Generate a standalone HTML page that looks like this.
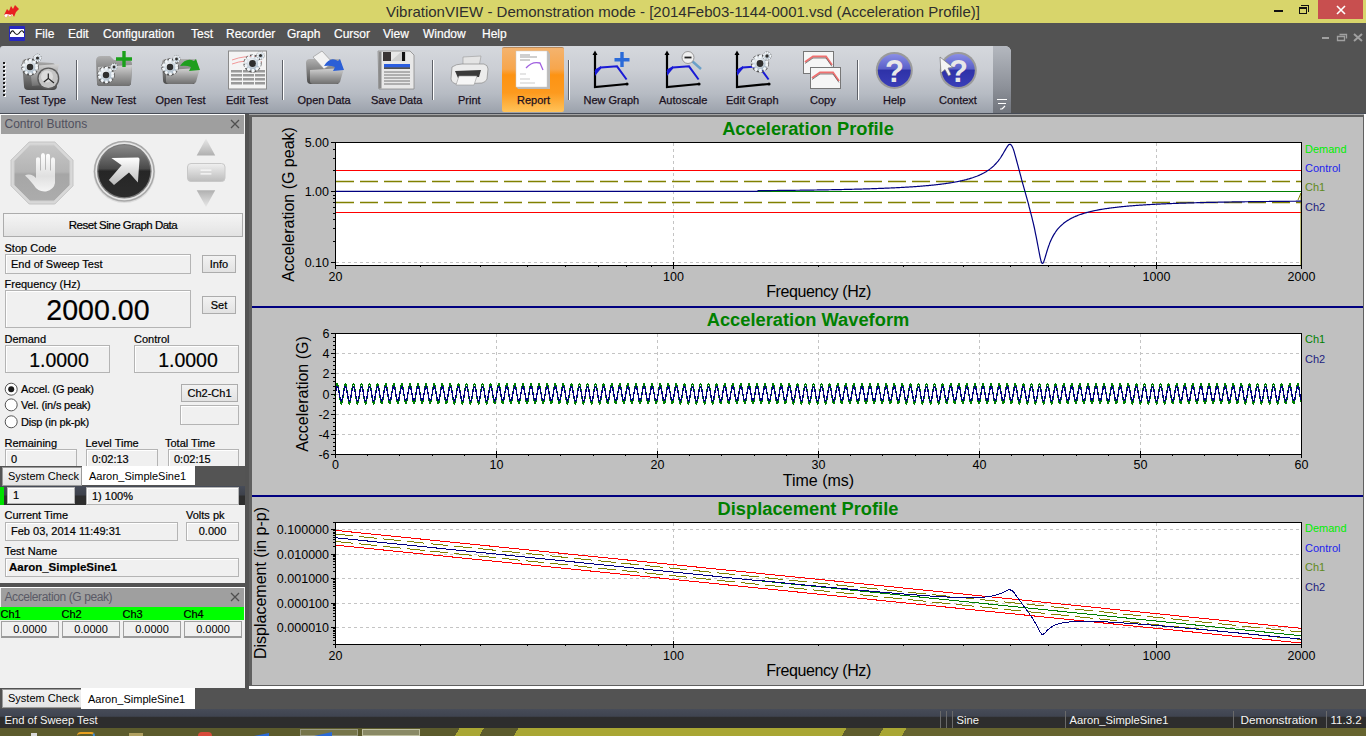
<!DOCTYPE html>
<html><head><meta charset="utf-8">
<style>
*{margin:0;padding:0;box-sizing:border-box}
html,body{width:1366px;height:736px;overflow:hidden;background:#535353;font-family:"Liberation Sans",sans-serif}
.a{position:absolute}
.t{position:absolute;white-space:nowrap;line-height:1}
#title{left:0;top:0;width:1366px;height:23px;background:#d8d56b}
#menu{left:0;top:23px;width:1366px;height:23px;background:#535353}
.mi{position:absolute;top:28px;color:#fff;font-size:12px;line-height:12px;-webkit-text-stroke:0.2px #fff}
#tb{left:0;top:46px;width:1011px;height:67px;background:linear-gradient(#d6d9de,#c4c7cd 45%,#aeb2b9);border-radius:4px 6px 0 0}
.tl{position:absolute;top:94px;font-size:11px;line-height:12px;color:#1a1020;white-space:nowrap;-webkit-text-stroke:0.25px #1a1020}
.sep{position:absolute;top:60px;width:2px;height:40px;background:linear-gradient(90deg,#5e6168 0 1px,#ffffff 1px)}
.ph{position:absolute;background:#9f9f9f;color:#50505e;font-size:12px;line-height:19px;padding-left:4px;border-top:1px solid #fff}
.lbl{position:absolute;font-size:11px;line-height:12px;color:#000;white-space:nowrap;-webkit-text-stroke:0.2px #000}
.fld{position:absolute;border:1px solid #b4b4b4;background:#f0f0f0;font-size:11px;color:#000;white-space:nowrap;box-shadow:inset 1px 1px 0 #fff;-webkit-text-stroke:0.2px #000}
.btn{position:absolute;border:1px solid #acacac;background:linear-gradient(#f2f2f2,#e2e2e2);font-size:11px;color:#000;text-align:center;white-space:nowrap;-webkit-text-stroke:0.2px #000}
.gt{position:absolute;font-weight:bold;color:#008000;font-size:18px;line-height:18px;white-space:nowrap}
.ax{position:absolute;font-size:13px;line-height:13px;color:#000;white-space:nowrap}
.axl{position:absolute;font-size:16px;line-height:16px;color:#000;white-space:nowrap}
.lg{position:absolute;font-size:11px;line-height:11px;white-space:nowrap}
</style></head><body>

<!-- TITLE BAR -->
<div id="title" class="a"></div>
<div class="t" style="left:386px;top:4px;font-size:15px;color:#2e2e2e">VibrationVIEW - Demonstration mode - [2014Feb03-1144-0001.vsd (Acceleration Profile)]</div>
<div class="a" style="left:1274px;top:10px;width:9px;height:2px;background:#111"></div>
<div class="a" style="left:1299px;top:7px;width:8px;height:7px;border:1px solid #111;border-top-width:2px"></div>
<div class="a" style="left:1301px;top:5px;width:8px;height:7px;border-top:1px solid #111;border-right:1px solid #111"></div>
<div class="a" style="left:1318px;top:0;width:45px;height:19px;background:#c84f4f"></div>
<svg class="a" style="left:1336px;top:5px" width="10" height="10"><path d="M1 1L9 9M9 1L1 9" stroke="#fff" stroke-width="1.6"/></svg>

<!-- MENU BAR -->
<div id="menu" class="a"></div>
<div class="mi" style="left:35px">File</div>
<div class="mi" style="left:68px">Edit</div>
<div class="mi" style="left:103px">Configuration</div>
<div class="mi" style="left:191px">Test</div>
<div class="mi" style="left:226px">Recorder</div>
<div class="mi" style="left:287px">Graph</div>
<div class="mi" style="left:334px">Cursor</div>
<div class="mi" style="left:383px">View</div>
<div class="mi" style="left:423px">Window</div>
<div class="mi" style="left:482px">Help</div>

<!-- LOGO -->
<svg class="a" style="left:1px;top:3px" width="20" height="16"><path d="M3 12 L6 6 L8 8 L10 3 L12 6 L14 2 L18 6 L15 9 L13 14 L11 11 L9 14 L7 12 L5 15Z" fill="#e82020"/><path d="M3 12 L5 15 L7 12 L9 14 L11 11 L13 14 L11 12 L5 11Z" fill="#fff"/></svg>
<div class="a" style="left:9px;top:26px;width:16px;height:15px;background:#2828c0;border-radius:1px"></div>
<div class="a" style="left:10px;top:29px;width:14px;height:8px;background:#fff"></div>
<svg class="a" style="left:10px;top:29px" width="14" height="8"><path d="M0 5 Q2 0 4 3 Q7 8 10 3 Q12 0 14 4" stroke="#111" stroke-width="1.1" fill="none"/></svg>
<div class="a" style="left:1322px;top:37px;width:7px;height:2px;background:#a0a0a0"></div>
<svg class="a" style="left:1336px;top:32px" width="12" height="10"><path d="M1.5 4.5h7v4h-7zM3.5 2.5h7v4" stroke="#a0a0a0" stroke-width="1.3" fill="none"/></svg>
<svg class="a" style="left:1353px;top:33px" width="10" height="9"><path d="M1 1L9 8M9 1L1 8" stroke="#a0a0a0" stroke-width="2"/></svg>
<!-- TOOLBAR -->
<div class="a" style="left:0;top:46px;width:1011px;height:67px;background:linear-gradient(#d5d8dd,#cbced4 35%,#b6bbc3 72%,#9ba1ab);border-radius:3px 6px 0 0"></div>
<div class="a" style="left:993px;top:46px;width:18px;height:67px;background:linear-gradient(#b4b8bf,#8e929a 60%,#70747c);border-radius:0 6px 0 0"></div>
<svg class="a" style="left:993px;top:96px" width="18" height="16"><path d="M4 3.5H14M5 7.5h8M9 13l3-3M7 13h2" stroke="#fff" stroke-width="1.2" fill="none"/></svg>
<div class="a" style="left:0;top:113px;width:1366px;height:1px;background:#474c56"></div>
<!-- gripper -->
<div class="a" style="left:4px;top:63px;width:2px;height:36px;background:repeating-linear-gradient(#fafafa 0 2px,transparent 2px 4px)"></div><div class="a" style="left:3px;top:62px;width:2px;height:36px;background:repeating-linear-gradient(#1a1a1a 0 2px,transparent 2px 4px)"></div>
<!-- separators -->
<div class="sep" style="left:76px"></div>
<div class="sep" style="left:282px"></div>
<div class="sep" style="left:432px"></div>
<div class="sep" style="left:568px"></div>
<div class="sep" style="left:857px"></div>
<!-- report highlight -->
<div class="a" style="left:502px;top:47px;width:62px;height:65px;border-radius:2px;border-top:1px solid #b98a5a;background:linear-gradient(#f4b36e,#f7a64c 33%,#fd9313 42%,#fd9a1e 70%,#ffc35a)"></div>
<!-- labels -->
<div class="tl" style="left:19px">Test Type</div>
<div class="tl" style="left:91px">New Test</div>
<div class="tl" style="left:155.5px">Open Test</div>
<div class="tl" style="left:226px">Edit Test</div>
<div class="tl" style="left:297.5px">Open Data</div>
<div class="tl" style="left:371px">Save Data</div>
<div class="tl" style="left:458px">Print</div>
<div class="tl" style="left:517px">Report</div>
<div class="tl" style="left:583.5px">New Graph</div>
<div class="tl" style="left:659px">Autoscale</div>
<div class="tl" style="left:726px">Edit Graph</div>
<div class="tl" style="left:810px">Copy</div>
<div class="tl" style="left:883px">Help</div>
<div class="tl" style="left:939px">Context</div>
<svg class="a" style="left:0;top:46px" width="1011" height="50">
<defs>
<linearGradient id="fold" x1="0" y1="0" x2="0" y2="1"><stop offset="0" stop-color="#b0b0b0"/><stop offset="1" stop-color="#4a4a4a"/></linearGradient>
<linearGradient id="foldf" x1="0" y1="0" x2="0" y2="1"><stop offset="0" stop-color="#d4d4d4"/><stop offset="0.5" stop-color="#a0a0a0"/><stop offset="1" stop-color="#707070"/></linearGradient>
<radialGradient id="gear" cx="0.4" cy="0.35" r="0.7"><stop offset="0" stop-color="#ffffff"/><stop offset="1" stop-color="#9db0c0"/></radialGradient>
<linearGradient id="bluq" x1="0" y1="0" x2="0" y2="1"><stop offset="0" stop-color="#8a8ee6"/><stop offset="0.45" stop-color="#5a60c8"/><stop offset="0.5" stop-color="#2e32a8"/><stop offset="1" stop-color="#3a3eb8"/></linearGradient>
<g id="gr"><circle r="6.4" fill="none" stroke="#555" stroke-width="1.2" stroke-dasharray="2.2,1.3"/><circle r="5.4" fill="url(#gear)" stroke="#f2f6f9" stroke-width="2.2" stroke-dasharray="2.1,1.4"/><circle r="2.6" fill="#2e2e2e"/></g>
</defs>
<!-- Test Type: folder + gears + clock -->
<path d="M22 17 Q22 13 26 13 L34 13 L37 16 L52 17 Q55 17 55 20 L57 40 Q57 44 53 44 L28 44 Q24 44 24 40 Z" fill="url(#fold)"/>
<path d="M30 20 L59 18 L55 38 L32 40 Z" fill="url(#foldf)"/>
<g transform="translate(30,21) scale(1.25)"><use href="#gr"/></g>
<g transform="translate(37.5,12) scale(0.6)"><use href="#gr"/></g>
<circle cx="48.3" cy="32.4" r="11" fill="#5a5a5a"/><circle cx="48.3" cy="32.4" r="9.6" fill="#c4c4c4"/><circle cx="47" cy="30.5" r="6" fill="#dcdcdc"/>
<path d="M48.3 27.5V32.4L43.8 36M48.3 32.4L54 37" stroke="#222" stroke-width="1.2" fill="none"/>
<!-- New Test -->
<path d="M96 15 Q96 10 101 10 L110 10 L114 14 L128 14 Q132 14 132 18 L131 37 Q131 40 127 40 L100 40 Q97 40 97 37 Z" fill="url(#fold)"/>
<path d="M98 21 L132 19 L131 37 Q131 40 127 40 L100 40 Q97 40 97 37 Z" fill="url(#foldf)"/>
<g transform="translate(106,29) scale(1.25)"><use href="#gr"/></g>
<g transform="translate(114,21) scale(0.55)"><use href="#gr"/></g>
<path d="M124 5V21M116 13H132" stroke="#1aa01a" stroke-width="3.4"/>
<!-- Open Test -->
<path d="M162 16 Q162 13 166 13 L196 13 L199 24 L194 38 L167 38 Q163 38 163 34 Z" fill="url(#fold)"/>
<path d="M166 24 L200 22 L196 36 Q195 38 192 38 L169 38 Q166 38 166 35 Z" fill="url(#foldf)"/>
<g transform="translate(170,21) scale(1.25)"><use href="#gr"/></g>
<g transform="translate(176.5,13) scale(0.55)"><use href="#gr"/></g>
<path d="M180 20 Q186 11 194 15 L196 13 L200 24 L189 25 L191 21 Q186 19 180 20Z" fill="#1e9e1e"/>
<!-- Edit Test -->
<rect x="228.5" y="5" width="38" height="38" fill="#f4f4f4" stroke="#8a8a8a"/>
<path d="M232 14 Q245 9 260 11M232 18 Q245 13 262 16" stroke="#f08080" stroke-width="0.8" fill="none"/>
<g fill="#9a9a9a"><rect x="231" y="24" width="11" height="2.5"/><rect x="243" y="24" width="11" height="2.5"/><rect x="255" y="24" width="10" height="2.5"/>
<rect x="231" y="28" width="11" height="2.5"/><rect x="243" y="28" width="11" height="2.5"/><rect x="255" y="28" width="10" height="2.5"/>
<rect x="231" y="32" width="11" height="2.5"/><rect x="243" y="32" width="11" height="2.5"/><rect x="255" y="32" width="10" height="2.5"/>
<rect x="231" y="36" width="11" height="2.5"/><rect x="243" y="36" width="11" height="2.5"/><rect x="255" y="36" width="10" height="2.5"/></g>
<g transform="translate(252.5,17.5) scale(1.3)"><use href="#gr"/></g>
<g transform="translate(260.5,9.5) scale(0.6)"><use href="#gr"/></g>
<!-- Open Data -->
<path d="M306 17 Q306 13 310 13 L340 13 L343 24 L338 38 L311 38 Q307 38 307 34 Z" fill="url(#fold)"/>
<path d="M313 11 L322 5 L333 17 L324 23Z" fill="#f2f2f2" stroke="#999" stroke-width="0.7"/>
<path d="M310 24 L344 22 L340 36 Q339 38 336 38 L313 38 Q310 38 310 35 Z" fill="url(#foldf)"/>
<path d="M324 20 Q330 10 338 15 L340 13 L344 24 L333 25 L335 21 Q330 19 324 20Z" fill="#2b5fd6"/>
<!-- Save Data floppy -->
<path d="M378 5 L410 5 L414 9 L414 43 L379 43 Z" fill="#e8e8e8" stroke="#8a8a8a" stroke-width="0.8"/>
<rect x="383" y="6" width="8" height="9" fill="#3a3535"/><path d="M391 15 L401 6 L406 6 L406 15Z" fill="#d0d0d0"/><rect x="402" y="6" width="3" height="9" fill="#111"/>
<rect x="384" y="18" width="26" height="3.5" fill="#2a5de0"/><rect x="384" y="21.5" width="26" height="1.2" fill="#111"/>
<path d="M384 26H410M384 29H410M384 32H410M384 35H410M384 38H410" stroke="#6a6a6a" stroke-width="0.9"/><rect x="378.5" y="5.5" width="3" height="37" fill="#8a8a8a"/>
<!-- Printer -->
<path d="M463 11 L481 10 L479 21 L463 21Z" fill="#e4e4e4" stroke="#999" stroke-width="0.6"/>
<path d="M452 21 Q456 18 462 18 L484 18 Q488 19 488 23 L487 33 Q486 36 482 37 L458 38 Q452 38 451 33Z" fill="#ececec" stroke="#8a8a8a" stroke-width="0.7"/>
<path d="M455 25 L481 24 L479 31 L458 32Z" fill="#3a3a3a"/>
<path d="M459 30 L477 30 L474 39 L456 39Z" fill="#f6f6f6" stroke="#999" stroke-width="0.6"/>
<!-- Report paper -->
<path d="M517 5 L548 5 L550 8 L550 43 L518 43 L516 40Z" fill="#bbb"/>
<rect x="516" y="5" width="31" height="36" fill="#fff" stroke="#ccc" stroke-width="0.5"/>
<path d="M520 9H530M520 11H537M520 14H530" stroke="#777" stroke-width="0.7"/>
<path d="M526 22 Q532 15 540 17 L543 24" stroke="#a060e0" stroke-width="1.3" fill="none"/>
<path d="M520 28H526M520 33H530M520 37H535" stroke="#aaa" stroke-width="0.6"/>
<!-- New Graph -->
<path d="M595 7V41L627 38" stroke="#000" stroke-width="2.2" fill="none"/>
<path d="M595 26 L601 21.5 L617 20.3 L626.6 33.5" stroke="#1a1ad6" stroke-width="2" fill="none"/>
<path d="M595 23.5L601 20 L601 22.5 L595 30Z" fill="#1a1ad6"/><path d="M592.5 9L595 4.5L597.5 9Z" fill="#000"/><circle cx="627" cy="38" r="1.6" fill="#000"/>
<path d="M622 6V21M614.5 13.7H629.5" stroke="#2a6ad8" stroke-width="3.4"/>
<!-- Autoscale -->
<path d="M667 7V41L699 38" stroke="#000" stroke-width="2.2" fill="none"/>
<path d="M667 26 L673 21.5 L689 20.3 L698.6 33.5" stroke="#1a1ad6" stroke-width="2" fill="none"/>
<path d="M667 23.5L673 20 L673 22.5 L667 30Z" fill="#1a1ad6"/><path d="M664.5 9L667 4.5L669.5 9Z" fill="#000"/><circle cx="699" cy="38" r="1.6" fill="#000"/>
<path d="M692 15 L701 23" stroke="#6aa0c8" stroke-width="2.4"/>
<circle cx="688" cy="11.5" r="6" fill="#f0f0f0" stroke="#999" stroke-width="1"/>
<path d="M684.5 11.5H691.5" stroke="#222" stroke-width="1.8"/>
<!-- Edit Graph -->
<path d="M737 7V41L769 38" stroke="#000" stroke-width="2.2" fill="none"/>
<path d="M737 26 L743 21.5 L759 20.3 L768.6 33.5" stroke="#1a1ad6" stroke-width="2" fill="none"/>
<path d="M737 23.5L743 20 L743 22.5 L737 30Z" fill="#1a1ad6"/><path d="M734.5 9L737 4.5L739.5 9Z" fill="#000"/><circle cx="769" cy="38" r="1.6" fill="#000"/>
<g transform="translate(760,17.5) scale(1.3)"><use href="#gr"/></g>
<g transform="translate(767,10) scale(0.65)"><use href="#gr"/></g>
<!-- Copy -->
<rect x="803.5" y="5.5" width="30" height="22" fill="#f6f6f6" stroke="#777"/>
<path d="M805 16 L813 10.5 L826 10.5 L832 19" stroke="#f07070" stroke-width="2" fill="none"/><path d="M805 17.5 L813 12 L826 12 L832 20.5" stroke="#555" stroke-width="0.7" fill="none"/>
<rect x="810.5" y="21.5" width="30" height="21" fill="#f6f6f6" stroke="#777"/>
<path d="M812 32 L820 26.5 L833 26.5 L839 35" stroke="#f07070" stroke-width="2" fill="none"/><path d="M812 33.5 L820 28 L833 28 L839 36.5" stroke="#555" stroke-width="0.7" fill="none"/>
<!-- Help -->
<circle cx="894.3" cy="24.4" r="18.5" fill="#9a9a9a"/><circle cx="894.3" cy="24.4" r="16.5" fill="url(#bluq)"/>
<text x="894.5" y="35.5" font-size="31" font-weight="bold" fill="#e8e8e8" text-anchor="middle" font-family="Liberation Sans">?</text>
<!-- Context -->
<circle cx="958.3" cy="24.4" r="18.5" fill="#9a9a9a"/><circle cx="958.3" cy="24.4" r="16.5" fill="url(#bluq)"/>
<text x="958.5" y="35.5" font-size="31" font-weight="bold" fill="#e8e8e8" text-anchor="middle" font-family="Liberation Sans">?</text>
<path d="M940 11 L941 27 L945 23.5 L948.5 30 L951 28.5 L948 22 L953 21.5Z" fill="#f4f4f4" stroke="#777" stroke-width="0.7"/>
</svg>

<!-- LEFT PANEL -->
<div class="a" style="left:0;top:114px;width:245px;height:469px;background:#f0f0f0;border-top:1px solid #fff"></div>
<div class="ph" style="left:1px;top:114px;width:243px;height:20px;padding-left:3.5px">Control Buttons</div>
<svg class="a" style="left:230px;top:119px" width="10" height="10"><path d="M1 1L9 9M9 1L1 9" stroke="#505050" stroke-width="1.3"/></svg>
<svg class="a" style="left:0;top:134px" width="245" height="80">
<defs>
<linearGradient id="octg" x1="0" y1="0" x2="0" y2="1"><stop offset="0" stop-color="#c6c6c6"/><stop offset="0.48" stop-color="#b4b4b4"/><stop offset="0.52" stop-color="#a6a6a6"/><stop offset="1" stop-color="#acacac"/></linearGradient>
<linearGradient id="handg" x1="0" y1="0" x2="0" y2="1"><stop offset="0" stop-color="#ffffff"/><stop offset="0.6" stop-color="#e0e0e0"/><stop offset="1" stop-color="#f4f4f4"/></linearGradient>
<linearGradient id="gog" x1="0" y1="0" x2="0" y2="1"><stop offset="0" stop-color="#8a8a8a"/><stop offset="0.45" stop-color="#4a4a4a"/><stop offset="0.5" stop-color="#262626"/><stop offset="1" stop-color="#2c2c2c"/></linearGradient>
<linearGradient id="arrg" x1="0" y1="0" x2="0" y2="1"><stop offset="0" stop-color="#ffffff"/><stop offset="1" stop-color="#b8b8b8"/></linearGradient>
<linearGradient id="trg" x1="0" y1="0" x2="0" y2="1"><stop offset="0" stop-color="#e8e8e8"/><stop offset="1" stop-color="#b0b0b0"/></linearGradient>
<linearGradient id="trg2" x1="0" y1="0" x2="0" y2="1"><stop offset="0" stop-color="#b0b0b0"/><stop offset="1" stop-color="#e8e8e8"/></linearGradient>
<linearGradient id="barg" x1="0" y1="0" x2="0" y2="1"><stop offset="0" stop-color="#f0f0f0"/><stop offset="1" stop-color="#bcbcbc"/></linearGradient>
</defs>
<!-- octagon: center 42,39 (abs 173) r ~31 -->
<polygon points="29.2,8 54.8,8 73,26.2 73,51.8 54.8,70 29.2,70 11,51.8 11,26.2" fill="#d8d8d8" stroke="#c4c4c4" stroke-width="1"/>
<polygon points="30,11 54,11 70,27 70,51 54,67 30,67 14,51 14,27" fill="url(#octg)" stroke="#d0d0d0" stroke-width="1"/>
<g transform="matrix(1 0 0 0.836 0 5.59)"><path d="M33.5 54 Q38 63 46 62 Q54 60 55 52 L55 24 Q55 21 53 21 Q51 21 51 24 L51 37 L50 37 L50 19 Q50 17 48 17 Q46 17 46 19 L46 36 L45 36 L45 19 Q45 16 43 16 Q41 16 41 19 L41 37 L40 37 L40 23 Q40 21 38 21 Q36 21 36 23 L36 46 Q34 43 31 42 Q27 41 25 43 Q29 47 33.5 54Z" fill="url(#handg)"/></g>
<!-- go circle center 124.3,37.2 -->
<circle cx="124.3" cy="38" r="31" fill="#cfcfcf" opacity="0.6"/>
<circle cx="124.3" cy="37.2" r="30.5" fill="#a8a8a8"/>
<circle cx="124.3" cy="37.2" r="29" fill="#e6e6e6"/>
<circle cx="124.3" cy="37.2" r="27.3" fill="#7a7a7a"/>
<circle cx="124.3" cy="37.2" r="26" fill="url(#gog)"/>
<path d="M111.4 23.9 L138 23.6 Q139.5 23.8 139.5 25.5 L137.9 48.4 L129 38.5 L114 51 L108.9 45.9 L121.6 31.2 Z" fill="url(#arrg)" stroke-linejoin="round"/>
<!-- up/down -->
<polygon points="206,4.5 215.2,21.4 196.7,21.4" fill="url(#trg)"/>
<rect x="187.5" y="29.5" width="37.5" height="18" rx="3.5" fill="url(#barg)" stroke="#c8c8c8"/>
<path d="M200.5 36.2H211.4M200.5 39.8H211.4" stroke="#fafafa" stroke-width="1.3"/>
<polygon points="196.7,56.2 215.2,56.2 206,73" fill="url(#trg2)"/>
</svg>
<div class="btn" style="left:3px;top:213px;width:240px;height:24px;line-height:22px;font-size:11.5px;letter-spacing:-0.5px;background:linear-gradient(#f4f4f4,#ececec 50%,#e2e2e2)">Reset Sine Graph Data</div>
<div class="lbl" style="left:4.5px;top:242px">Stop Code</div>
<div class="fld" style="left:5px;top:254px;width:186px;height:20px;line-height:18px;padding-left:5px">End of Sweep Test</div>
<div class="btn" style="left:202px;top:255px;width:34px;height:18px;line-height:16px">Info</div>
<div class="lbl" style="left:4.5px;top:278px">Frequency (Hz)</div>
<div class="fld" style="left:5px;top:290px;width:186px;height:38px;line-height:38px;text-align:center;font-size:28.6px;padding-left:0">2000.00</div>
<div class="btn" style="left:202px;top:296px;width:34px;height:18px;line-height:16px">Set</div>
<div class="lbl" style="left:4.5px;top:333px">Demand</div>
<div class="lbl" style="left:134px;top:333px">Control</div>
<div class="fld" style="left:5px;top:345px;width:105px;height:28px;line-height:28px;text-align:center;font-size:19.5px;padding-left:3px">1.0000</div>
<div class="fld" style="left:134px;top:345px;width:105px;height:28px;line-height:28px;text-align:center;font-size:19.5px;padding-left:3px">1.0000</div>
<!-- radios -->
<svg class="a" style="left:4px;top:382px" width="16" height="48">
<circle cx="7.2" cy="7.2" r="6" fill="#fff" stroke="#555"/><circle cx="7.2" cy="7.2" r="3" fill="#1a1a1a"/>
<circle cx="7.2" cy="22.9" r="6" fill="#fff" stroke="#555"/>
<circle cx="7.2" cy="39.8" r="6" fill="#fff" stroke="#555"/>
</svg>
<div class="lbl" style="left:21px;top:383px;letter-spacing:-0.2px">Accel. (G peak)</div>
<div class="lbl" style="left:21px;top:399px;letter-spacing:-0.2px">Vel. (in/s peak)</div>
<div class="lbl" style="left:21px;top:416px;letter-spacing:-0.2px">Disp (in pk-pk)</div>
<div class="btn" style="left:181px;top:384px;width:57px;height:18px;line-height:16px">Ch2-Ch1</div>
<div class="fld" style="left:180px;top:405px;width:59px;height:20px"></div>
<div class="lbl" style="left:4.5px;top:437px">Remaining</div>
<div class="lbl" style="left:85.5px;top:437px">Level Time</div>
<div class="lbl" style="left:165px;top:437px">Total Time</div>
<div class="fld" style="left:5px;top:449px;width:72px;height:20px;line-height:18px;padding-left:5px">0</div>
<div class="fld" style="left:86px;top:449px;width:72px;height:20px;line-height:18px;padding-left:5px">0:02:13</div>
<div class="fld" style="left:168px;top:449px;width:71px;height:20px;line-height:18px;padding-left:5px">0:02:15</div>
<!-- overlay tab strip glitch -->
<div class="a" style="left:0;top:466px;width:245px;height:20px;background:#545454"></div>
<div class="a" style="left:2px;top:467px;width:80px;height:19px;background:linear-gradient(#f2f2f2,#e4e4e4);border:1px solid #9a9a9a;font-size:11px;line-height:17px;padding-left:5px;white-space:nowrap">System Check</div>
<div class="a" style="left:82px;top:466px;width:113px;height:19px;background:#fff;font-size:11px;line-height:21px;padding-left:7px;white-space:nowrap">Aaron_SimpleSine1</div>
<div class="a" style="left:0;top:486px;width:245px;height:19px;background:linear-gradient(#474c58,#3e424c 45%,#2e2e2e 55%,#2e2e2e)"></div>
<div class="a" style="left:0;top:487px;width:4px;height:18px;background:#00e000"></div>
<div class="fld" style="left:7px;top:487px;width:68px;height:17px;line-height:15px;padding-left:5px">1</div>
<div class="fld" style="left:86px;top:487px;width:153px;height:18px;line-height:16px;padding-left:5px">1) 100%</div>
<div class="lbl" style="left:4.5px;top:509px">Current Time</div>
<div class="lbl" style="left:186px;top:509px">Volts pk</div>
<div class="fld" style="left:5px;top:522px;width:173px;height:19px;line-height:17px;padding-left:5px">Feb 03, 2014 11:49:31</div>
<div class="fld" style="left:186px;top:522px;width:53px;height:19px;line-height:17px;text-align:center">0.000</div>
<div class="lbl" style="left:4.5px;top:545px">Test Name</div>
<div class="fld" style="left:5px;top:558px;width:234px;height:19px;line-height:17px;padding-left:3px;font-weight:bold;font-size:11.5px">Aaron_SimpleSine1</div>

<!-- LEFT PANEL 2 -->
<div class="a" style="left:0;top:587px;width:245px;height:101px;background:#f0f0f0;border-top:1px solid #fff"></div>
<div class="ph" style="left:1px;top:587px;width:243px;height:20px;line-height:19px;padding-left:3.5px;color:#5a5a66;letter-spacing:-0.4px">Acceleration (G peak)</div>
<svg class="a" style="left:230px;top:592px" width="10" height="10"><path d="M1 1L9 9M9 1L1 9" stroke="#505050" stroke-width="1.3"/></svg>
<div class="a" style="left:0;top:607px;width:244px;height:13px;background:#00ff00"></div>
<div class="lbl" style="left:0.5px;top:608px">Ch1</div>
<div class="lbl" style="left:61.5px;top:608px">Ch2</div>
<div class="lbl" style="left:122.5px;top:608px">Ch3</div>
<div class="lbl" style="left:183.5px;top:608px">Ch4</div>
<div class="a" style="left:1px;top:621px;width:58px;height:17px;border:1px solid #a0a0a0;border-bottom:2px solid #9a9a9a;background:#f0f0f0;font-size:11px;line-height:15px;text-align:center">0.0000</div>
<div class="a" style="left:62px;top:621px;width:58px;height:17px;border:1px solid #a0a0a0;border-bottom:2px solid #9a9a9a;background:#f0f0f0;font-size:11px;line-height:15px;text-align:center">0.0000</div>
<div class="a" style="left:123px;top:621px;width:58px;height:17px;border:1px solid #a0a0a0;border-bottom:2px solid #9a9a9a;background:#f0f0f0;font-size:11px;line-height:15px;text-align:center">0.0000</div>
<div class="a" style="left:184px;top:621px;width:58px;height:17px;border:1px solid #a0a0a0;border-bottom:2px solid #9a9a9a;background:#f0f0f0;font-size:11px;line-height:15px;text-align:center">0.0000</div>

<!-- BOTTOM TABS -->
<div class="a" style="left:2px;top:689px;width:80px;height:19px;background:linear-gradient(#f2f2f2,#e4e4e4);border:1px solid #9a9a9a;font-size:11px;line-height:17px;padding-left:5px;white-space:nowrap">System Check</div>
<div class="a" style="left:81px;top:688px;width:114px;height:21px;background:#fff;font-size:11px;line-height:23px;padding-left:7px;white-space:nowrap">Aaron_SimpleSine1</div>


<!-- GRAPH AREA -->
<div class="a" style="left:249px;top:114px;width:1117px;height:575px;background:#fff"></div>
<div class="a" style="left:249px;top:114px;width:1115px;height:572px;background:#c0c0c0;border-top:3px solid #606060;border-left:3px solid #606060;border-right:1px solid #606060;border-bottom:1px solid #606060"></div>
<div class="a" style="left:249px;top:114px;width:1115px;height:1px;background:#a4a4a4"></div>

<svg class="a" style="left:0;top:0" width="1366" height="736" font-family="Liberation Sans"><rect x="335.5" y="142.5" width="966" height="123" fill="#fff" stroke="none"/>
<text x="808" y="134.6" font-size="18.3" font-weight="bold" text-anchor="middle" fill="#008000">Acceleration Profile</text>
<line x1="336" y1="262.5" x2="1301" y2="262.5" stroke="#c4c4c4" stroke-dasharray="3,3"/>
<line x1="673.5" y1="143" x2="673.5" y2="265" stroke="#c4c4c4" stroke-dasharray="3,3"/>
<line x1="1156.5" y1="143" x2="1156.5" y2="265" stroke="#c4c4c4" stroke-dasharray="3,3"/>
<line x1="336" y1="170.5" x2="1301" y2="170.5" stroke="#ff0000" stroke-width="1"/>
<line x1="336" y1="212.5" x2="1301" y2="212.5" stroke="#ff0000" stroke-width="1"/>
<line x1="336" y1="181.5" x2="1301" y2="181.5" stroke="#808000" stroke-width="1.3" stroke-dasharray="18,6"/>
<line x1="336" y1="202.5" x2="1301" y2="202.5" stroke="#808000" stroke-width="1.3" stroke-dasharray="18,6"/>
<line x1="336" y1="191.5" x2="1301" y2="191.5" stroke="#008000" stroke-width="1"/>
<polyline points="1298,200 1301,193 1301,265" fill="none" stroke="#808000" stroke-width="1"/>
<polyline points="335.0,191.40 335.7,191.40 336.4,191.40 337.1,191.40 337.8,191.40 338.4,191.40 339.1,191.40 339.8,191.40 340.5,191.40 341.2,191.40 341.9,191.40 342.6,191.40 343.3,191.40 344.0,191.40 344.7,191.40 345.4,191.40 346.0,191.40 346.7,191.40 347.4,191.40 348.1,191.40 348.8,191.40 349.5,191.40 350.2,191.40 350.9,191.40 351.6,191.40 352.2,191.40 352.9,191.40 353.6,191.40 354.3,191.40 355.0,191.40 355.7,191.40 356.4,191.40 357.1,191.40 357.8,191.40 358.5,191.40 359.1,191.40 359.8,191.40 360.5,191.40 361.2,191.40 361.9,191.40 362.6,191.40 363.3,191.40 364.0,191.40 364.7,191.40 365.4,191.40 366.1,191.40 366.7,191.40 367.4,191.40 368.1,191.40 368.8,191.40 369.5,191.40 370.2,191.40 370.9,191.40 371.6,191.40 372.3,191.40 372.9,191.40 373.6,191.40 374.3,191.40 375.0,191.40 375.7,191.40 376.4,191.40 377.1,191.40 377.8,191.40 378.5,191.40 379.2,191.40 379.9,191.40 380.5,191.40 381.2,191.40 381.9,191.40 382.6,191.40 383.3,191.40 384.0,191.40 384.7,191.40 385.4,191.40 386.1,191.40 386.8,191.40 387.4,191.40 388.1,191.40 388.8,191.40 389.5,191.40 390.2,191.40 390.9,191.40 391.6,191.40 392.3,191.40 393.0,191.40 393.6,191.40 394.3,191.40 395.0,191.40 395.7,191.40 396.4,191.40 397.1,191.40 397.8,191.40 398.5,191.40 399.2,191.40 399.9,191.40 400.6,191.40 401.2,191.40 401.9,191.40 402.6,191.40 403.3,191.40 404.0,191.40 404.7,191.40 405.4,191.40 406.1,191.40 406.8,191.40 407.4,191.40 408.1,191.40 408.8,191.40 409.5,191.40 410.2,191.40 410.9,191.40 411.6,191.40 412.3,191.40 413.0,191.40 413.7,191.40 414.4,191.40 415.0,191.40 415.7,191.40 416.4,191.40 417.1,191.40 417.8,191.40 418.5,191.40 419.2,191.40 419.9,191.40 420.6,191.40 421.2,191.40 421.9,191.40 422.6,191.40 423.3,191.40 424.0,191.40 424.7,191.40 425.4,191.40 426.1,191.40 426.8,191.40 427.5,191.40 428.1,191.40 428.8,191.40 429.5,191.40 430.2,191.40 430.9,191.40 431.6,191.40 432.3,191.40 433.0,191.40 433.7,191.40 434.4,191.40 435.1,191.40 435.7,191.40 436.4,191.40 437.1,191.40 437.8,191.40 438.5,191.40 439.2,191.40 439.9,191.40 440.6,191.40 441.3,191.40 441.9,191.40 442.6,191.40 443.3,191.40 444.0,191.40 444.7,191.40 445.4,191.40 446.1,191.40 446.8,191.40 447.5,191.40 448.2,191.40 448.9,191.40 449.5,191.40 450.2,191.40 450.9,191.40 451.6,191.40 452.3,191.40 453.0,191.40 453.7,191.40 454.4,191.40 455.1,191.40 455.8,191.40 456.4,191.40 457.1,191.40 457.8,191.40 458.5,191.40 459.2,191.40 459.9,191.40 460.6,191.40 461.3,191.40 462.0,191.40 462.6,191.40 463.3,191.40 464.0,191.40 464.7,191.40 465.4,191.40 466.1,191.40 466.8,191.40 467.5,191.40 468.2,191.40 468.9,191.40 469.6,191.40 470.2,191.40 470.9,191.40 471.6,191.40 472.3,191.40 473.0,191.40 473.7,191.40 474.4,191.40 475.1,191.40 475.8,191.40 476.4,191.40 477.1,191.40 477.8,191.40 478.5,191.40 479.2,191.40 479.9,191.40 480.6,191.40 481.3,191.40 482.0,191.40 482.7,191.40 483.4,191.40 484.0,191.40 484.7,191.40 485.4,191.40 486.1,191.40 486.8,191.40 487.5,191.40 488.2,191.40 488.9,191.40 489.6,191.40 490.2,191.40 490.9,191.40 491.6,191.40 492.3,191.40 493.0,191.40 493.7,191.40 494.4,191.40 495.1,191.40 495.8,191.40 496.5,191.40 497.1,191.40 497.8,191.40 498.5,191.40 499.2,191.40 499.9,191.40 500.6,191.40 501.3,191.40 502.0,191.40 502.7,191.40 503.4,191.40 504.1,191.40 504.7,191.40 505.4,191.40 506.1,191.40 506.8,191.40 507.5,191.40 508.2,191.40 508.9,191.40 509.6,191.40 510.3,191.40 510.9,191.40 511.6,191.40 512.3,191.40 513.0,191.40 513.7,191.40 514.4,191.40 515.1,191.40 515.8,191.40 516.5,191.40 517.2,191.40 517.9,191.40 518.5,191.40 519.2,191.40 519.9,191.40 520.6,191.40 521.3,191.40 522.0,191.40 522.7,191.40 523.4,191.40 524.1,191.40 524.8,191.40 525.4,191.40 526.1,191.40 526.8,191.40 527.5,191.40 528.2,191.40 528.9,191.40 529.6,191.40 530.3,191.40 531.0,191.40 531.6,191.40 532.3,191.40 533.0,191.40 533.7,191.40 534.4,191.40 535.1,191.40 535.8,191.40 536.5,191.40 537.2,191.40 537.9,191.40 538.5,191.40 539.2,191.40 539.9,191.40 540.6,191.40 541.3,191.40 542.0,191.40 542.7,191.40 543.4,191.40 544.1,191.40 544.8,191.40 545.5,191.40 546.1,191.40 546.8,191.40 547.5,191.40 548.2,191.40 548.9,191.40 549.6,191.40 550.3,191.40 551.0,191.40 551.7,191.40 552.4,191.40 553.0,191.40 553.7,191.40 554.4,191.40 555.1,191.40 555.8,191.40 556.5,191.40 557.2,191.40 557.9,191.40 558.6,191.40 559.2,191.40 559.9,191.40 560.6,191.40 561.3,191.40 562.0,191.40 562.7,191.40 563.4,191.40 564.1,191.40 564.8,191.40 565.5,191.40 566.1,191.40 566.8,191.40 567.5,191.40 568.2,191.40 568.9,191.40 569.6,191.40 570.3,191.40 571.0,191.40 571.7,191.40 572.4,191.40 573.0,191.40 573.7,191.40 574.4,191.40 575.1,191.40 575.8,191.40 576.5,191.40 577.2,191.40 577.9,191.40 578.6,191.40 579.3,191.40 580.0,191.40 580.6,191.40 581.3,191.40 582.0,191.40 582.7,191.40 583.4,191.40 584.1,191.40 584.8,191.40 585.5,191.40 586.2,191.40 586.9,191.40 587.5,191.40 588.2,191.40 588.9,191.40 589.6,191.40 590.3,191.40 591.0,191.40 591.7,191.40 592.4,191.40 593.1,191.40 593.8,191.40 594.4,191.40 595.1,191.40 595.8,191.40 596.5,191.40 597.2,191.40 597.9,191.40 598.6,191.40 599.3,191.40 600.0,191.40 600.6,191.40 601.3,191.40 602.0,191.40 602.7,191.40 603.4,191.40 604.1,191.40 604.8,191.40 605.5,191.40 606.2,191.40 606.9,191.40 607.5,191.40 608.2,191.40 608.9,191.40 609.6,191.40 610.3,191.40 611.0,191.40 611.7,191.40 612.4,191.40 613.1,191.40 613.8,191.40 614.5,191.40 615.1,191.40 615.8,191.40 616.5,191.40 617.2,191.40 617.9,191.40 618.6,191.40 619.3,191.40 620.0,191.40 620.7,191.40 621.4,191.40 622.0,191.40 622.7,191.40 623.4,191.40 624.1,191.40 624.8,191.40 625.5,191.40 626.2,191.40 626.9,191.40 627.6,191.40 628.2,191.40 628.9,191.40 629.6,191.40 630.3,191.40 631.0,191.40 631.7,191.40 632.4,191.40 633.1,191.40 633.8,191.40 634.5,191.40 635.1,191.40 635.8,191.40 636.5,191.40 637.2,191.40 637.9,191.40 638.6,191.40 639.3,191.40 640.0,191.40 640.7,191.40 641.4,191.40 642.0,191.40 642.7,191.40 643.4,191.40 644.1,191.40 644.8,191.40 645.5,191.40 646.2,191.40 646.9,191.40 647.6,191.40 648.3,191.40 649.0,191.40 649.6,191.40 650.3,191.40 651.0,191.40 651.7,191.40 652.4,191.40 653.1,191.40 653.8,191.40 654.5,191.40 655.2,191.40 655.9,191.40 656.5,191.40 657.2,191.40 657.9,191.40 658.6,191.40 659.3,191.40 660.0,191.40 660.7,191.40 661.4,191.40 662.1,191.40 662.8,191.40 663.4,191.40 664.1,191.40 664.8,191.40 665.5,191.40 666.2,191.40 666.9,191.40 667.6,191.40 668.3,191.40 669.0,191.40 669.6,191.40 670.3,191.40 671.0,191.40 671.7,191.40 672.4,191.40 673.1,191.40 673.8,191.40 674.5,191.40 675.2,191.40 675.9,191.40 676.5,191.40 677.2,191.40 677.9,191.40 678.6,191.40 679.3,191.40 680.0,191.40 680.7,191.40 681.4,191.40 682.1,191.40 682.8,191.40 683.5,191.40 684.1,191.40 684.8,191.40 685.5,191.40 686.2,191.40 686.9,191.40 687.6,191.40 688.3,191.40 689.0,191.40 689.7,191.40 690.4,191.40 691.0,191.40 691.7,191.40 692.4,191.40 693.1,191.40 693.8,191.40 694.5,191.40 695.2,191.40 695.9,191.40 696.6,191.40 697.2,191.40 697.9,191.40 698.6,191.40 699.3,191.40 700.0,191.40 700.7,191.40 701.4,191.40 702.1,191.40 702.8,191.40 703.5,191.40 704.1,191.40 704.8,191.40 705.5,191.40 706.2,191.40 706.9,191.40 707.6,191.40 708.3,191.40 709.0,191.40 709.7,191.40 710.4,191.40 711.0,191.40 711.7,191.40 712.4,191.40 713.1,191.40 713.8,191.40 714.5,191.40 715.2,191.40 715.9,191.40 716.6,191.40 717.3,191.40 718.0,191.40 718.6,191.40 719.3,191.40 720.0,191.40 720.7,191.40 721.4,191.40 722.1,191.40 722.8,191.40 723.5,191.40 724.2,191.40 724.9,191.40 725.5,191.40 726.2,191.40 726.9,191.40 727.6,191.40 728.3,191.40 729.0,191.40 729.7,191.40 730.4,191.40 731.1,191.40 731.8,191.40 732.4,191.40 733.1,191.40 733.8,191.40 734.5,191.40 735.2,191.40 735.9,191.40 736.6,191.40 737.3,191.40 738.0,191.40 738.6,191.40 739.3,191.40 740.0,191.40 740.7,191.40 741.4,191.40 742.1,191.40 742.8,191.40 743.5,191.40 744.2,191.40 744.9,191.40 745.5,191.40 746.2,191.40 746.9,191.40 747.6,191.40 748.3,191.40 749.0,191.40 749.7,191.40 750.4,191.40 751.1,191.40 751.8,191.40 752.5,191.40 753.1,191.40 753.8,191.40 754.5,191.40 755.2,191.40 755.9,191.40 756.6,191.40 757.3,191.40 758.0,190.64 758.7,190.64 759.4,190.63 760.0,190.62 760.7,190.62 761.4,190.61 762.1,190.61 762.8,190.60 763.5,190.60 764.2,190.59 764.9,190.59 765.6,190.58 766.2,190.57 766.9,190.57 767.6,190.56 768.3,190.56 769.0,190.55 769.7,190.54 770.4,190.54 771.1,190.53 771.8,190.52 772.5,190.52 773.1,190.51 773.8,190.51 774.5,190.50 775.2,190.49 775.9,190.49 776.6,190.48 777.3,190.47 778.0,190.47 778.7,190.46 779.4,190.45 780.0,190.44 780.7,190.44 781.4,190.43 782.1,190.42 782.8,190.42 783.5,190.41 784.2,190.40 784.9,190.39 785.6,190.39 786.3,190.38 787.0,190.37 787.6,190.36 788.3,190.36 789.0,190.35 789.7,190.34 790.4,190.33 791.1,190.33 791.8,190.32 792.5,190.31 793.2,190.30 793.9,190.29 794.5,190.29 795.2,190.28 795.9,190.27 796.6,190.26 797.3,190.25 798.0,190.24 798.7,190.24 799.4,190.23 800.1,190.22 800.8,190.21 801.4,190.20 802.1,190.19 802.8,190.18 803.5,190.17 804.2,190.16 804.9,190.15 805.6,190.14 806.3,190.14 807.0,190.13 807.6,190.12 808.3,190.11 809.0,190.10 809.7,190.09 810.4,190.08 811.1,190.07 811.8,190.06 812.5,190.05 813.2,190.04 813.9,190.03 814.5,190.02 815.2,190.01 815.9,189.99 816.6,189.98 817.3,189.97 818.0,189.96 818.7,189.95 819.4,189.94 820.1,189.93 820.8,189.92 821.5,189.91 822.1,189.89 822.8,189.88 823.5,189.87 824.2,189.86 824.9,189.85 825.6,189.84 826.3,189.82 827.0,189.81 827.7,189.80 828.4,189.79 829.0,189.77 829.7,189.76 830.4,189.75 831.1,189.74 831.8,189.72 832.5,189.71 833.2,189.70 833.9,189.68 834.6,189.67 835.2,189.65 835.9,189.64 836.6,189.63 837.3,189.61 838.0,189.60 838.7,189.58 839.4,189.57 840.1,189.56 840.8,189.54 841.5,189.53 842.1,189.51 842.8,189.50 843.5,189.48 844.2,189.47 844.9,189.45 845.6,189.43 846.3,189.42 847.0,189.40 847.7,189.39 848.4,189.37 849.0,189.35 849.7,189.34 850.4,189.32 851.1,189.30 851.8,189.29 852.5,189.27 853.2,189.25 853.9,189.23 854.6,189.22 855.3,189.20 856.0,189.18 856.6,189.16 857.3,189.14 858.0,189.12 858.7,189.11 859.4,189.09 860.1,189.07 860.8,189.05 861.5,189.03 862.2,189.01 862.9,188.99 863.5,188.97 864.2,188.95 864.9,188.93 865.6,188.91 866.3,188.89 867.0,188.86 867.7,188.84 868.4,188.82 869.1,188.80 869.8,188.78 870.4,188.75 871.1,188.73 871.8,188.71 872.5,188.69 873.2,188.66 873.9,188.64 874.6,188.62 875.3,188.59 876.0,188.57 876.6,188.54 877.3,188.52 878.0,188.49 878.7,188.47 879.4,188.44 880.1,188.41 880.8,188.39 881.5,188.36 882.2,188.34 882.9,188.31 883.5,188.28 884.2,188.25 884.9,188.22 885.6,188.20 886.3,188.17 887.0,188.14 887.7,188.11 888.4,188.08 889.1,188.05 889.8,188.02 890.5,187.99 891.1,187.96 891.8,187.93 892.5,187.89 893.2,187.86 893.9,187.83 894.6,187.80 895.3,187.76 896.0,187.73 896.7,187.69 897.4,187.66 898.0,187.62 898.7,187.59 899.4,187.55 900.1,187.52 900.8,187.48 901.5,187.44 902.2,187.40 902.9,187.37 903.6,187.33 904.2,187.29 904.9,187.25 905.6,187.21 906.3,187.17 907.0,187.13 907.7,187.08 908.4,187.04 909.1,187.00 909.8,186.96 910.5,186.91 911.1,186.87 911.8,186.82 912.5,186.78 913.2,186.73 913.9,186.68 914.6,186.64 915.3,186.59 916.0,186.54 916.7,186.49 917.4,186.44 918.0,186.39 918.7,186.34 919.4,186.28 920.1,186.23 920.8,186.18 921.5,186.12 922.2,186.07 922.9,186.01 923.6,185.95 924.3,185.89 925.0,185.83 925.6,185.77 926.3,185.71 927.0,185.65 927.7,185.59 928.4,185.53 929.1,185.46 929.8,185.40 930.5,185.33 931.2,185.26 931.9,185.19 932.5,185.12 933.2,185.05 933.9,184.98 934.6,184.91 935.3,184.83 936.0,184.76 936.7,184.68 937.4,184.60 938.1,184.52 938.8,184.44 939.4,184.36 940.1,184.28 940.8,184.19 941.5,184.11 942.2,184.02 942.9,183.93 943.6,183.84 944.3,183.75 945.0,183.65 945.6,183.56 946.3,183.46 947.0,183.36 947.7,183.26 948.4,183.15 949.1,183.05 949.8,182.94 950.5,182.83 951.2,182.72 951.9,182.61 952.5,182.49 953.2,182.37 953.9,182.25 954.6,182.13 955.3,182.00 956.0,181.87 956.7,181.74 957.4,181.61 958.1,181.47 958.8,181.33 959.5,181.19 960.1,181.04 960.8,180.89 961.5,180.74 962.2,180.59 962.9,180.43 963.6,180.26 964.3,180.10 965.0,179.93 965.7,179.75 966.4,179.57 967.0,179.39 967.7,179.20 968.4,179.01 969.1,178.81 969.8,178.61 970.5,178.40 971.2,178.18 971.9,177.96 972.6,177.74 973.2,177.51 973.9,177.27 974.6,177.02 975.3,176.77 976.0,176.51 976.7,176.25 977.4,175.97 978.1,175.69 978.8,175.40 979.5,175.10 980.1,174.79 980.8,174.47 981.5,174.14 982.2,173.79 982.9,173.44 983.6,173.08 984.3,172.70 985.0,172.31 985.7,171.90 986.4,171.48 987.0,171.05 987.7,170.60 988.4,170.13 989.1,169.64 989.8,169.13 990.5,168.61 991.2,168.06 991.9,167.49 992.6,166.89 993.3,166.27 994.0,165.62 994.6,164.94 995.3,164.23 996.0,163.49 996.7,162.72 997.4,161.91 998.1,161.06 998.8,160.17 999.5,159.24 1000.2,158.27 1000.9,157.25 1001.5,156.19 1002.2,155.09 1002.9,153.95 1003.6,152.77 1004.3,151.57 1005.0,150.35 1005.7,149.14 1006.4,147.96 1007.1,146.86 1007.8,145.88 1008.4,145.07 1009.1,144.52 1009.8,144.28 1010.5,144.43 1011.2,144.99 1011.9,145.98 1012.6,147.37 1013.3,149.12 1014.0,151.17 1014.6,153.43 1015.3,155.85 1016.0,158.38 1016.7,160.97 1017.4,163.59 1018.1,166.22 1018.8,168.85 1019.5,171.46 1020.2,174.05 1020.9,176.62 1021.5,179.16 1022.2,181.69 1022.9,184.20 1023.6,186.69 1024.3,189.18 1025.0,191.66 1025.7,194.14 1026.4,196.62 1027.1,199.12 1027.8,201.63 1028.5,204.17 1029.1,206.74 1029.8,209.34 1030.5,211.99 1031.2,214.70 1031.9,217.47 1032.6,220.31 1033.3,223.23 1034.0,226.25 1034.7,229.37 1035.3,232.61 1036.0,235.97 1036.7,239.45 1037.4,243.06 1038.1,246.76 1038.8,250.50 1039.5,254.17 1040.2,257.58 1040.9,260.46 1041.6,262.49 1042.2,263.41 1042.9,263.18 1043.6,261.98 1044.3,260.10 1045.0,257.85 1045.7,255.47 1046.4,253.08 1047.1,250.78 1047.8,248.60 1048.5,246.55 1049.2,244.64 1049.8,242.86 1050.5,241.20 1051.2,239.65 1051.9,238.21 1052.6,236.87 1053.3,235.61 1054.0,234.43 1054.7,233.32 1055.4,232.27 1056.0,231.29 1056.7,230.36 1057.4,229.48 1058.1,228.65 1058.8,227.86 1059.5,227.12 1060.2,226.40 1060.9,225.72 1061.6,225.08 1062.3,224.46 1063.0,223.87 1063.6,223.30 1064.3,222.76 1065.0,222.24 1065.7,221.75 1066.4,221.27 1067.1,220.81 1067.8,220.37 1068.5,219.94 1069.2,219.53 1069.8,219.14 1070.5,218.75 1071.2,218.39 1071.9,218.03 1072.6,217.69 1073.3,217.35 1074.0,217.03 1074.7,216.72 1075.4,216.42 1076.1,216.13 1076.8,215.84 1077.4,215.57 1078.1,215.30 1078.8,215.04 1079.5,214.79 1080.2,214.54 1080.9,214.31 1081.6,214.08 1082.3,213.85 1083.0,213.63 1083.7,213.42 1084.3,213.21 1085.0,213.01 1085.7,212.81 1086.4,212.62 1087.1,212.43 1087.8,212.25 1088.5,212.07 1089.2,211.89 1089.9,211.72 1090.5,211.56 1091.2,211.39 1091.9,211.23 1092.6,211.08 1093.3,210.93 1094.0,210.78 1094.7,210.63 1095.4,210.49 1096.1,210.35 1096.8,210.22 1097.5,210.08 1098.1,209.95 1098.8,209.82 1099.5,209.70 1100.2,209.58 1100.9,209.46 1101.6,209.34 1102.3,209.22 1103.0,209.11 1103.7,209.00 1104.3,208.89 1105.0,208.78 1105.7,208.68 1106.4,208.57 1107.1,208.47 1107.8,208.37 1108.5,208.28 1109.2,208.18 1109.9,208.09 1110.6,208.00 1111.2,207.91 1111.9,207.82 1112.6,207.73 1113.3,207.64 1114.0,207.56 1114.7,207.48 1115.4,207.39 1116.1,207.31 1116.8,207.23 1117.5,207.16 1118.2,207.08 1118.8,207.01 1119.5,206.93 1120.2,206.86 1120.9,206.79 1121.6,206.72 1122.3,206.65 1123.0,206.58 1123.7,206.51 1124.4,206.45 1125.0,206.38 1125.7,206.32 1126.4,206.25 1127.1,206.19 1127.8,206.13 1128.5,206.07 1129.2,206.01 1129.9,205.95 1130.6,205.89 1131.3,205.84 1132.0,205.78 1132.6,205.73 1133.3,205.67 1134.0,205.62 1134.7,205.56 1135.4,205.51 1136.1,205.46 1136.8,205.41 1137.5,205.36 1138.2,205.31 1138.8,205.26 1139.5,205.21 1140.2,205.17 1140.9,205.12 1141.6,205.07 1142.3,205.03 1143.0,204.98 1143.7,204.94 1144.4,204.89 1145.1,204.85 1145.8,204.81 1146.4,204.77 1147.1,204.72 1147.8,204.68 1148.5,204.64 1149.2,204.60 1149.9,204.56 1150.6,204.52 1151.3,204.49 1152.0,204.45 1152.7,204.41 1153.3,204.37 1154.0,204.34 1154.7,204.30 1155.4,204.26 1156.1,204.23 1156.8,204.19 1157.5,204.16 1158.2,204.13 1158.9,204.09 1159.5,204.06 1160.2,204.03 1160.9,203.99 1161.6,203.96 1162.3,203.93 1163.0,203.90 1163.7,203.87 1164.4,203.84 1165.1,203.81 1165.8,203.78 1166.5,203.75 1167.1,203.72 1167.8,203.69 1168.5,203.66 1169.2,203.63 1169.9,203.60 1170.6,203.58 1171.3,203.55 1172.0,203.52 1172.7,203.49 1173.3,203.47 1174.0,203.44 1174.7,203.42 1175.4,203.39 1176.1,203.37 1176.8,203.34 1177.5,203.32 1178.2,203.29 1178.9,203.27 1179.6,203.24 1180.2,203.22 1180.9,203.20 1181.6,203.17 1182.3,203.15 1183.0,203.13 1183.7,203.10 1184.4,203.08 1185.1,203.06 1185.8,203.04 1186.5,203.02 1187.2,202.99 1187.8,202.97 1188.5,202.95 1189.2,202.93 1189.9,202.91 1190.6,202.89 1191.3,202.87 1192.0,202.85 1192.7,202.83 1193.4,202.81 1194.0,202.79 1194.7,202.77 1195.4,202.75 1196.1,202.73 1196.8,202.72 1197.5,202.70 1198.2,202.68 1198.9,202.66 1199.6,202.64 1200.3,202.63 1201.0,202.61 1201.6,202.59 1202.3,202.57 1203.0,202.56 1203.7,202.54 1204.4,202.52 1205.1,202.51 1205.8,202.49 1206.5,202.47 1207.2,202.46 1207.8,202.44 1208.5,202.43 1209.2,202.41 1209.9,202.40 1210.6,202.38 1211.3,202.36 1212.0,202.35 1212.7,202.34 1213.4,202.32 1214.1,202.31 1214.8,202.29 1215.4,202.28 1216.1,202.26 1216.8,202.25 1217.5,202.23 1218.2,202.22 1218.9,202.21 1219.6,202.19 1220.3,202.18 1221.0,202.17 1221.7,202.15 1222.3,202.14 1223.0,202.13 1223.7,202.11 1224.4,202.10 1225.1,202.09 1225.8,202.08 1226.5,202.06 1227.2,202.05 1227.9,202.04 1228.5,202.03 1229.2,202.02 1229.9,202.00 1230.6,201.99 1231.3,201.98 1232.0,201.97 1232.7,201.96 1233.4,201.95 1234.1,201.93 1234.8,201.92 1235.5,201.91 1236.1,201.90 1236.8,201.89 1237.5,201.88 1238.2,201.87 1238.9,201.86 1239.6,201.85 1240.3,201.84 1241.0,201.83 1241.7,201.82 1242.3,201.81 1243.0,201.80 1243.7,201.79 1244.4,201.78 1245.1,201.77 1245.8,201.76 1246.5,201.75 1247.2,201.74 1247.9,201.73 1248.6,201.72 1249.2,201.71 1249.9,201.70 1250.6,201.69 1251.3,201.68 1252.0,201.67 1252.7,201.66 1253.4,201.66 1254.1,201.65 1254.8,201.64 1255.5,201.63 1256.2,201.62 1256.8,201.61 1257.5,201.60 1258.2,201.59 1258.9,201.59 1259.6,201.58 1260.3,201.57 1261.0,201.56 1261.7,201.55 1262.4,201.55 1263.0,201.54 1263.7,201.53 1264.4,201.52 1265.1,201.51 1265.8,201.51 1266.5,201.50 1267.2,201.49 1267.9,201.48 1268.6,201.48 1269.3,201.47 1270.0,201.46 1270.6,201.46 1271.3,201.45 1272.0,201.44 1272.7,201.43 1273.4,201.43 1274.1,201.42 1274.8,201.41 1275.5,201.41 1276.2,201.40 1276.8,201.39 1277.5,201.39 1278.2,201.38 1278.9,201.37 1279.6,201.37 1280.3,201.36 1281.0,201.35 1281.7,201.35 1282.4,201.34 1283.1,201.33 1283.8,201.33 1284.4,201.32 1285.1,201.32 1285.8,201.31 1286.5,201.30 1287.2,201.30 1287.9,201.29 1288.6,201.29 1289.3,201.28 1290.0,201.27 1290.7,201.27 1291.3,201.26 1292.0,201.26 1292.7,201.25 1293.4,201.25 1294.1,201.24 1294.8,201.23 1295.5,201.23 1296.2,201.22 1296.9,201.22 1297.5,201.21 1298.2,201.21 1298.9,201.20 1299.6,201.20 1300.3,201.19 1301.0,201.19" fill="none" stroke="#000080" stroke-width="1.2" stroke-linejoin="round"/>
<rect x="335.5" y="142.5" width="966" height="123" fill="none" stroke="#000" stroke-width="1"/>
<line x1="331" y1="262.5" x2="335" y2="262.5" stroke="#000"/>
<line x1="333" y1="241.5" x2="335" y2="241.5" stroke="#000"/>
<line x1="333" y1="228.5" x2="335" y2="228.5" stroke="#000"/>
<line x1="333" y1="219.5" x2="335" y2="219.5" stroke="#000"/>
<line x1="333" y1="213.5" x2="335" y2="213.5" stroke="#000"/>
<line x1="333" y1="207.5" x2="335" y2="207.5" stroke="#000"/>
<line x1="333" y1="202.5" x2="335" y2="202.5" stroke="#000"/>
<line x1="333" y1="198.5" x2="335" y2="198.5" stroke="#000"/>
<line x1="333" y1="195.5" x2="335" y2="195.5" stroke="#000"/>
<line x1="331" y1="191.5" x2="335" y2="191.5" stroke="#000"/>
<line x1="333" y1="170.5" x2="335" y2="170.5" stroke="#000"/>
<line x1="333" y1="158.5" x2="335" y2="158.5" stroke="#000"/>
<line x1="333" y1="149.5" x2="335" y2="149.5" stroke="#000"/>
<line x1="333" y1="142.5" x2="335" y2="142.5" stroke="#000"/>
<line x1="331" y1="142.5" x2="335" y2="142.5" stroke="#000"/>
<line x1="335.5" y1="265" x2="335.5" y2="267" stroke="#000"/>
<line x1="420.5" y1="265" x2="420.5" y2="267" stroke="#000"/>
<line x1="480.5" y1="265" x2="480.5" y2="267" stroke="#000"/>
<line x1="527.5" y1="265" x2="527.5" y2="267" stroke="#000"/>
<line x1="565.5" y1="265" x2="565.5" y2="267" stroke="#000"/>
<line x1="598.5" y1="265" x2="598.5" y2="267" stroke="#000"/>
<line x1="626.5" y1="265" x2="626.5" y2="267" stroke="#000"/>
<line x1="651.5" y1="265" x2="651.5" y2="267" stroke="#000"/>
<line x1="673.5" y1="262" x2="673.5" y2="269" stroke="#000"/>
<line x1="818.5" y1="265" x2="818.5" y2="267" stroke="#000"/>
<line x1="903.5" y1="265" x2="903.5" y2="267" stroke="#000"/>
<line x1="963.5" y1="265" x2="963.5" y2="267" stroke="#000"/>
<line x1="1010.5" y1="265" x2="1010.5" y2="267" stroke="#000"/>
<line x1="1048.5" y1="265" x2="1048.5" y2="267" stroke="#000"/>
<line x1="1081.5" y1="265" x2="1081.5" y2="267" stroke="#000"/>
<line x1="1109.5" y1="265" x2="1109.5" y2="267" stroke="#000"/>
<line x1="1134.5" y1="265" x2="1134.5" y2="267" stroke="#000"/>
<line x1="1156.5" y1="262" x2="1156.5" y2="269" stroke="#000"/>
<line x1="1301.5" y1="265" x2="1301.5" y2="267" stroke="#000"/>
<line x1="335.5" y1="265" x2="335.5" y2="269" stroke="#000"/>
<line x1="1301.5" y1="265" x2="1301.5" y2="269" stroke="#000"/>
<text x="329" y="146.6" font-size="12.5" text-anchor="end" fill="#000" >5.00</text>
<text x="329" y="195.6" font-size="12.5" text-anchor="end" fill="#000" >1.00</text>
<text x="329" y="266.6" font-size="12.5" text-anchor="end" fill="#000" >0.10</text>
<text x="335.5" y="280.7" font-size="12.5" text-anchor="middle" fill="#000" >20</text>
<text x="673.5" y="280.7" font-size="12.5" text-anchor="middle" fill="#000" >100</text>
<text x="1156.5" y="280.7" font-size="12.5" text-anchor="middle" fill="#000" >1000</text>
<text x="1301.5" y="280.7" font-size="12.5" text-anchor="middle" fill="#000" >2000</text>
<text x="818.5" y="296.8" font-size="16" text-anchor="middle" letter-spacing="-0.4">Frequency (Hz)</text>
<text transform="translate(293.5,204.5) rotate(-90)" font-size="16" text-anchor="middle">Acceleration (G peak)</text>
<text x="1305" y="152.5" font-size="11" text-anchor="start" fill="#00ee00" >Demand</text>
<text x="1305" y="172.3" font-size="11" text-anchor="start" fill="#2222ee" >Control</text>
<text x="1305" y="191.3" font-size="11" text-anchor="start" fill="#5f8a1a" >Ch1</text>
<text x="1305" y="211.2" font-size="11" text-anchor="start" fill="#22227f" >Ch2</text>
<rect x="252" y="306" width="1111" height="2" fill="#000080"/>
<rect x="252" y="495" width="1111" height="2" fill="#000080"/>
<rect x="335.5" y="333.5" width="966" height="121" fill="#fff" stroke="none"/>
<text x="808" y="325.6" font-size="18.3" font-weight="bold" text-anchor="middle" fill="#008000">Acceleration Waveform</text>
<line x1="336" y1="353.5" x2="1301" y2="353.5" stroke="#c4c4c4" stroke-dasharray="3,3"/>
<line x1="336" y1="373.5" x2="1301" y2="373.5" stroke="#c4c4c4" stroke-dasharray="3,3"/>
<line x1="336" y1="394.5" x2="1301" y2="394.5" stroke="#c4c4c4" stroke-dasharray="3,3"/>
<line x1="336" y1="414.5" x2="1301" y2="414.5" stroke="#c4c4c4" stroke-dasharray="3,3"/>
<line x1="336" y1="434.5" x2="1301" y2="434.5" stroke="#c4c4c4" stroke-dasharray="3,3"/>
<line x1="496.5" y1="334" x2="496.5" y2="454" stroke="#c4c4c4" stroke-dasharray="3,3"/>
<line x1="657.5" y1="334" x2="657.5" y2="454" stroke="#c4c4c4" stroke-dasharray="3,3"/>
<line x1="818.5" y1="334" x2="818.5" y2="454" stroke="#c4c4c4" stroke-dasharray="3,3"/>
<line x1="979.5" y1="334" x2="979.5" y2="454" stroke="#c4c4c4" stroke-dasharray="3,3"/>
<line x1="1140.5" y1="334" x2="1140.5" y2="454" stroke="#c4c4c4" stroke-dasharray="3,3"/>
<polyline points="335.0,396.00 335.5,392.10 336.0,388.45 336.5,385.60 337.0,383.97 337.5,383.82 338.0,385.16 338.5,387.80 339.0,391.33 339.5,395.23 340.0,398.91 340.5,401.84 341.0,403.56 341.5,403.82 342.0,402.58 342.5,400.03 343.0,396.54 343.5,392.65 344.0,388.93 344.5,385.94 345.0,384.12 345.5,383.75 346.0,384.89 346.5,387.35 347.0,390.79 347.5,394.67 348.0,398.42 348.5,401.48 349.0,403.40 349.5,403.87 350.0,402.84 350.5,400.46 351.0,397.08 351.5,393.21 352.0,389.43 352.5,386.30 353.0,384.29 353.5,383.71 354.0,384.64 354.5,386.93 355.0,390.26 355.5,394.11 356.0,397.92 356.5,401.11 357.0,403.21 357.5,403.90 358.0,403.08 358.5,400.87 359.0,397.61 359.5,393.77 360.0,389.94 360.5,386.69 361.0,384.50 361.5,383.70 362.0,384.41 362.5,386.53 363.0,389.74 363.5,393.55 364.0,397.40 364.5,400.71 365.0,402.99 365.5,403.89 366.0,403.29 366.5,401.26 367.0,398.12 367.5,394.33 368.0,390.47 368.5,387.10 369.0,384.73 369.5,383.72 370.0,384.22 370.5,386.15 371.0,389.23 371.5,392.99 372.0,396.87 372.5,400.29 373.0,402.74 373.5,403.86 374.0,403.46 374.5,401.63 375.0,398.62 375.5,394.89 376.0,391.00 376.5,387.53 377.0,384.99 377.5,383.78 378.0,384.06 378.5,385.80 379.0,388.73 379.5,392.43 380.0,396.33 380.5,399.85 381.0,402.47 381.5,403.79 382.0,403.61 382.5,401.97 383.0,399.11 383.5,395.45 384.0,391.54 384.5,387.98 385.0,385.28 385.5,383.86 386.0,383.92 386.5,385.47 387.0,388.26 387.5,391.88 388.0,395.78 388.5,399.39 389.0,402.17 389.5,403.69 390.0,403.73 390.5,402.29 391.0,399.58 391.5,396.00 392.0,392.09 392.5,388.44 393.0,385.60 393.5,383.97 394.0,383.82 394.5,385.16 395.0,387.80 395.5,391.33 396.0,395.23 396.5,398.92 397.0,401.84 397.5,403.56 398.0,403.82 398.5,402.58 399.0,400.03 399.5,396.54 400.0,392.65 400.5,388.93 401.0,385.94 401.5,384.12 402.0,383.75 402.5,384.89 403.0,387.35 403.5,390.79 404.0,394.67 404.5,398.42 405.0,401.49 405.5,403.40 406.0,403.87 406.5,402.84 407.0,400.46 407.5,397.08 408.0,393.21 408.5,389.43 409.0,386.30 409.5,384.29 410.0,383.71 410.5,384.64 411.0,386.93 411.5,390.26 412.0,394.11 412.5,397.92 413.0,401.11 413.5,403.21 414.0,403.90 414.5,403.08 415.0,400.87 415.5,397.60 416.0,393.77 416.5,389.94 417.0,386.69 417.5,384.50 418.0,383.70 418.5,384.41 419.0,386.53 419.5,389.74 420.0,393.55 420.5,397.40 421.0,400.71 421.5,402.99 422.0,403.89 422.5,403.29 423.0,401.26 423.5,398.12 424.0,394.33 424.5,390.46 425.0,387.10 425.5,384.73 426.0,383.72 426.5,384.22 427.0,386.15 427.5,389.23 428.0,392.99 428.5,396.87 429.0,400.29 429.5,402.74 430.0,403.86 430.5,403.46 431.0,401.63 431.5,398.62 432.0,394.89 432.5,391.00 433.0,387.53 433.5,384.99 434.0,383.78 434.5,384.06 435.0,385.80 435.5,388.74 436.0,392.43 436.5,396.33 437.0,399.85 437.5,402.47 438.0,403.79 438.5,403.61 439.0,401.97 439.5,399.10 440.0,395.45 440.5,391.54 441.0,387.98 441.5,385.28 442.0,383.86 442.5,383.93 443.0,385.47 443.5,388.26 444.0,391.88 444.5,395.78 445.0,399.39 445.5,402.17 446.0,403.69 446.5,403.73 447.0,402.29 447.5,399.57 448.0,396.00 448.5,392.09 449.0,388.44 449.5,385.59 450.0,383.97 450.5,383.82 451.0,385.16 451.5,387.80 452.0,391.33 452.5,395.23 453.0,398.92 453.5,401.84 454.0,403.56 454.5,403.82 455.0,402.58 455.5,400.03 456.0,396.54 456.5,392.65 457.0,388.93 457.5,385.93 458.0,384.12 458.5,383.75 459.0,384.89 459.5,387.36 460.0,390.79 460.5,394.67 461.0,398.43 461.5,401.49 462.0,403.40 462.5,403.87 463.0,402.84 463.5,400.46 464.0,397.08 464.5,393.21 465.0,389.43 465.5,386.30 466.0,384.29 466.5,383.71 467.0,384.64 467.5,386.93 468.0,390.26 468.5,394.11 469.0,397.92 469.5,401.11 470.0,403.21 470.5,403.90 471.0,403.08 471.5,400.87 472.0,397.60 472.5,393.77 473.0,389.94 473.5,386.69 474.0,384.50 474.5,383.70 475.0,384.41 475.5,386.53 476.0,389.74 476.5,393.55 477.0,397.40 477.5,400.71 478.0,402.99 478.5,403.89 479.0,403.29 479.5,401.26 480.0,398.12 480.5,394.33 481.0,390.46 481.5,387.09 482.0,384.73 482.5,383.72 483.0,384.22 483.5,386.15 484.0,389.23 484.5,392.99 485.0,396.87 485.5,400.29 486.0,402.74 486.5,403.86 487.0,403.46 487.5,401.63 488.0,398.62 488.5,394.89 489.0,391.00 489.5,387.52 490.0,384.99 490.5,383.77 491.0,384.06 491.5,385.80 492.0,388.74 492.5,392.43 493.0,396.33 493.5,399.85 494.0,402.47 494.5,403.79 495.0,403.61 495.5,401.97 496.0,399.10 496.5,395.44 497.0,391.54 497.5,387.97 498.0,385.28 498.5,383.86 499.0,383.93 499.5,385.47 500.0,388.26 500.5,391.88 501.0,395.79 501.5,399.39 502.0,402.17 502.5,403.69 503.0,403.73 503.5,402.29 504.0,399.57 504.5,396.00 505.0,392.09 505.5,388.44 506.0,385.59 506.5,383.97 507.0,383.82 507.5,385.17 508.0,387.80 508.5,391.33 509.0,395.23 509.5,398.92 510.0,401.84 510.5,403.56 511.0,403.82 511.5,402.58 512.0,400.02 512.5,396.54 513.0,392.65 513.5,388.93 514.0,385.93 514.5,384.12 515.0,383.75 515.5,384.89 516.0,387.36 516.5,390.79 517.0,394.67 517.5,398.43 518.0,401.49 518.5,403.40 519.0,403.87 519.5,402.84 520.0,400.46 520.5,397.08 521.0,393.21 521.5,389.42 522.0,386.30 522.5,384.29 523.0,383.71 523.5,384.64 524.0,386.94 524.5,390.26 525.0,394.11 525.5,397.92 526.0,401.11 526.5,403.21 527.0,403.90 527.5,403.08 528.0,400.87 528.5,397.60 529.0,393.77 529.5,389.94 530.0,386.68 530.5,384.50 531.0,383.70 531.5,384.42 532.0,386.53 532.5,389.74 533.0,393.55 533.5,397.40 534.0,400.71 534.5,402.99 535.0,403.89 535.5,403.28 536.0,401.26 536.5,398.12 537.0,394.33 537.5,390.46 538.0,387.09 538.5,384.73 539.0,383.72 539.5,384.22 540.0,386.16 540.5,389.23 541.0,392.99 541.5,396.87 542.0,400.29 542.5,402.74 543.0,403.86 543.5,403.46 544.0,401.62 544.5,398.62 545.0,394.89 545.5,391.00 546.0,387.52 546.5,384.99 547.0,383.77 547.5,384.06 548.0,385.80 548.5,388.74 549.0,392.43 549.5,396.33 550.0,399.85 550.5,402.47 551.0,403.79 551.5,403.61 552.0,401.97 552.5,399.10 553.0,395.44 553.5,391.54 554.0,387.97 554.5,385.28 555.0,383.86 555.5,383.93 556.0,385.47 556.5,388.26 557.0,391.88 557.5,395.79 558.0,399.40 558.5,402.17 559.0,403.69 559.5,403.73 560.0,402.29 560.5,399.57 561.0,395.99 561.5,392.09 562.0,388.44 562.5,385.59 563.0,383.97 563.5,383.82 564.0,385.17 564.5,387.80 565.0,391.33 565.5,395.23 566.0,398.92 566.5,401.84 567.0,403.56 567.5,403.82 568.0,402.58 568.5,400.02 569.0,396.54 569.5,392.64 570.0,388.92 570.5,385.93 571.0,384.12 571.5,383.75 572.0,384.89 572.5,387.36 573.0,390.79 573.5,394.68 574.0,398.43 574.5,401.49 575.0,403.40 575.5,403.87 576.0,402.84 576.5,400.46 577.0,397.07 577.5,393.20 578.0,389.42 578.5,386.30 579.0,384.29 579.5,383.71 580.0,384.64 580.5,386.94 581.0,390.26 581.5,394.12 582.0,397.92 582.5,401.11 583.0,403.21 583.5,403.90 584.0,403.08 584.5,400.87 585.0,397.60 585.5,393.77 586.0,389.93 586.5,386.68 587.0,384.50 587.5,383.70 588.0,384.42 588.5,386.54 589.0,389.74 589.5,393.55 590.0,397.40 590.5,400.71 591.0,402.99 591.5,403.89 592.0,403.28 592.5,401.26 593.0,398.11 593.5,394.33 594.0,390.46 594.5,387.09 595.0,384.73 595.5,383.72 596.0,384.22 596.5,386.16 597.0,389.23 597.5,392.99 598.0,396.87 598.5,400.30 599.0,402.74 599.5,403.86 600.0,403.46 600.5,401.62 601.0,398.61 601.5,394.89 602.0,390.99 602.5,387.52 603.0,384.99 603.5,383.77 604.0,384.06 604.5,385.80 605.0,388.74 605.5,392.44 606.0,396.34 606.5,399.86 607.0,402.47 607.5,403.79 608.0,403.61 608.5,401.97 609.0,399.10 609.5,395.44 610.0,391.54 610.5,387.97 611.0,385.28 611.5,383.86 612.0,383.93 612.5,385.47 613.0,388.26 613.5,391.88 614.0,395.79 614.5,399.40 615.0,402.17 615.5,403.69 616.0,403.73 616.5,402.28 617.0,399.57 617.5,395.99 618.0,392.09 618.5,388.44 619.0,385.59 619.5,383.97 620.0,383.82 620.5,385.17 621.0,387.80 621.5,391.33 622.0,395.24 622.5,398.92 623.0,401.84 623.5,403.56 624.0,403.82 624.5,402.58 625.0,400.02 625.5,396.54 626.0,392.64 626.5,388.92 627.0,385.93 627.5,384.12 628.0,383.75 628.5,384.89 629.0,387.36 629.5,390.79 630.0,394.68 630.5,398.43 631.0,401.49 631.5,403.40 632.0,403.87 632.5,402.84 633.0,400.45 633.5,397.07 634.0,393.20 634.5,389.42 635.0,386.29 635.5,384.29 636.0,383.71 636.5,384.64 637.0,386.94 637.5,390.26 638.0,394.12 638.5,397.92 639.0,401.11 639.5,403.21 640.0,403.90 640.5,403.08 641.0,400.87 641.5,397.60 642.0,393.76 642.5,389.93 643.0,386.68 643.5,384.50 644.0,383.70 644.5,384.42 645.0,386.54 645.5,389.74 646.0,393.56 646.5,397.41 647.0,400.72 647.5,402.99 648.0,403.89 648.5,403.28 649.0,401.26 649.5,398.11 650.0,394.32 650.5,390.46 651.0,387.09 651.5,384.73 652.0,383.72 652.5,384.22 653.0,386.16 653.5,389.24 654.0,393.00 654.5,396.88 655.0,400.30 655.5,402.75 656.0,403.86 656.5,403.46 657.0,401.62 657.5,398.61 658.0,394.88 658.5,390.99 659.0,387.52 659.5,384.99 660.0,383.77 660.5,384.06 661.0,385.80 661.5,388.74 662.0,392.44 662.5,396.34 663.0,399.86 663.5,402.47 664.0,403.79 664.5,403.61 665.0,401.97 665.5,399.10 666.0,395.44 666.5,391.54 667.0,387.97 667.5,385.28 668.0,383.86 668.5,383.93 669.0,385.47 669.5,388.26 670.0,391.88 670.5,395.79 671.0,399.40 671.5,402.17 672.0,403.69 672.5,403.73 673.0,402.28 673.5,399.57 674.0,395.99 674.5,392.09 675.0,388.44 675.5,385.59 676.0,383.97 676.5,383.82 677.0,385.17 677.5,387.80 678.0,391.34 678.5,395.24 679.0,398.92 679.5,401.84 680.0,403.56 680.5,403.82 681.0,402.57 681.5,400.02 682.0,396.54 682.5,392.64 683.0,388.92 683.5,385.93 684.0,384.12 684.5,383.75 685.0,384.89 685.5,387.36 686.0,390.80 686.5,394.68 687.0,398.43 687.5,401.49 688.0,403.40 688.5,403.87 689.0,402.84 689.5,400.45 690.0,397.07 690.5,393.20 691.0,389.42 691.5,386.29 692.0,384.29 692.5,383.71 693.0,384.64 693.5,386.94 694.0,390.26 694.5,394.12 695.0,397.93 695.5,401.12 696.0,403.21 696.5,403.90 697.0,403.08 697.5,400.86 698.0,397.60 698.5,393.76 699.0,389.93 699.5,386.68 700.0,384.49 700.5,383.70 701.0,384.42 701.5,386.54 702.0,389.74 702.5,393.56 703.0,397.41 703.5,400.72 704.0,402.99 704.5,403.89 705.0,403.28 705.5,401.25 706.0,398.11 706.5,394.32 707.0,390.46 707.5,387.09 708.0,384.73 708.5,383.72 709.0,384.22 709.5,386.16 710.0,389.24 710.5,393.00 711.0,396.88 711.5,400.30 712.0,402.75 712.5,403.86 713.0,403.46 713.5,401.62 714.0,398.61 714.5,394.88 715.0,390.99 715.5,387.52 716.0,384.99 716.5,383.77 717.0,384.06 717.5,385.80 718.0,388.74 718.5,392.44 719.0,396.34 719.5,399.86 720.0,402.47 720.5,403.79 721.0,403.61 721.5,401.96 722.0,399.10 722.5,395.44 723.0,391.53 723.5,387.97 724.0,385.28 724.5,383.86 725.0,383.93 725.5,385.47 726.0,388.27 726.5,391.88 727.0,395.79 727.5,399.40 728.0,402.17 728.5,403.69 729.0,403.73 729.5,402.28 730.0,399.57 730.5,395.99 731.0,392.08 731.5,388.44 732.0,385.59 732.5,383.97 733.0,383.82 733.5,385.17 734.0,387.80 734.5,391.34 735.0,395.24 735.5,398.92 736.0,401.84 736.5,403.56 737.0,403.82 737.5,402.57 738.0,400.02 738.5,396.53 739.0,392.64 739.5,388.92 740.0,385.93 740.5,384.12 741.0,383.75 741.5,384.89 742.0,387.36 742.5,390.80 743.0,394.68 743.5,398.43 744.0,401.49 744.5,403.40 745.0,403.87 745.5,402.84 746.0,400.45 746.5,397.07 747.0,393.20 747.5,389.42 748.0,386.29 748.5,384.29 749.0,383.71 749.5,384.64 750.0,386.94 750.5,390.27 751.0,394.12 751.5,397.93 752.0,401.12 752.5,403.21 753.0,403.90 753.5,403.07 754.0,400.86 754.5,397.60 755.0,393.76 755.5,389.93 756.0,386.68 756.5,384.49 757.0,383.70 757.5,384.42 758.0,386.54 758.5,389.75 759.0,393.56 759.5,397.41 760.0,400.72 760.5,402.99 761.0,403.89 761.5,403.28 762.0,401.25 762.5,398.11 763.0,394.32 763.5,390.45 764.0,387.09 764.5,384.73 765.0,383.72 765.5,384.22 766.0,386.16 766.5,389.24 767.0,393.00 767.5,396.88 768.0,400.30 768.5,402.75 769.0,403.86 769.5,403.46 770.0,401.62 770.5,398.61 771.0,394.88 771.5,390.99 772.0,387.52 772.5,384.99 773.0,383.77 773.5,384.06 774.0,385.80 774.5,388.74 775.0,392.44 775.5,396.34 776.0,399.86 776.5,402.47 777.0,403.79 777.5,403.61 778.0,401.96 778.5,399.10 779.0,395.44 779.5,391.53 780.0,387.97 780.5,385.27 781.0,383.86 781.5,383.93 782.0,385.47 782.5,388.27 783.0,391.89 783.5,395.79 784.0,399.40 784.5,402.17 785.0,403.69 785.5,403.73 786.0,402.28 786.5,399.57 787.0,395.99 787.5,392.08 788.0,388.43 788.5,385.59 789.0,383.97 789.5,383.82 790.0,385.17 790.5,387.81 791.0,391.34 791.5,395.24 792.0,398.93 792.5,401.84 793.0,403.56 793.5,403.82 794.0,402.57 794.5,400.02 795.0,396.53 795.5,392.64 796.0,388.92 796.5,385.93 797.0,384.12 797.5,383.75 798.0,384.89 798.5,387.36 799.0,390.80 799.5,394.68 800.0,398.43 800.5,401.49 801.0,403.40 801.5,403.87 802.0,402.84 802.5,400.45 803.0,397.07 803.5,393.20 804.0,389.42 804.5,386.29 805.0,384.29 805.5,383.71 806.0,384.64 806.5,386.94 807.0,390.27 807.5,394.12 808.0,397.93 808.5,401.12 809.0,403.21 809.5,403.90 810.0,403.07 810.5,400.86 811.0,397.59 811.5,393.76 812.0,389.93 812.5,386.68 813.0,384.49 813.5,383.70 814.0,384.42 814.5,386.54 815.0,389.75 815.5,393.56 816.0,397.41 816.5,400.72 817.0,402.99 817.5,403.89 818.0,403.28 818.5,401.25 819.0,398.11 819.5,394.32 820.0,390.45 820.5,387.09 821.0,384.73 821.5,383.72 822.0,384.22 822.5,386.16 823.0,389.24 823.5,393.00 824.0,396.88 824.5,400.30 825.0,402.75 825.5,403.86 826.0,403.46 826.5,401.62 827.0,398.61 827.5,394.88 828.0,390.99 828.5,387.52 829.0,384.99 829.5,383.77 830.0,384.06 830.5,385.81 831.0,388.75 831.5,392.44 832.0,396.34 832.5,399.86 833.0,402.47 833.5,403.79 834.0,403.61 834.5,401.96 835.0,399.10 835.5,395.44 836.0,391.53 836.5,387.97 837.0,385.27 837.5,383.86 838.0,383.93 838.5,385.47 839.0,388.27 839.5,391.89 840.0,395.79 840.5,399.40 841.0,402.17 841.5,403.69 842.0,403.73 842.5,402.28 843.0,399.56 843.5,395.99 844.0,392.08 844.5,388.43 845.0,385.59 845.5,383.97 846.0,383.82 846.5,385.17 847.0,387.81 847.5,391.34 848.0,395.24 848.5,398.93 849.0,401.85 849.5,403.56 850.0,403.82 850.5,402.57 851.0,400.02 851.5,396.53 852.0,392.64 852.5,388.92 853.0,385.93 853.5,384.12 854.0,383.75 854.5,384.89 855.0,387.36 855.5,390.80 856.0,394.68 856.5,398.44 857.0,401.49 857.5,403.40 858.0,403.87 858.5,402.84 859.0,400.45 859.5,397.07 860.0,393.20 860.5,389.42 861.0,386.29 861.5,384.29 862.0,383.71 862.5,384.64 863.0,386.94 863.5,390.27 864.0,394.12 864.5,397.93 865.0,401.12 865.5,403.21 866.0,403.90 866.5,403.07 867.0,400.86 867.5,397.59 868.0,393.76 868.5,389.93 869.0,386.68 869.5,384.49 870.0,383.70 870.5,384.42 871.0,386.54 871.5,389.75 872.0,393.56 872.5,397.41 873.0,400.72 873.5,402.99 874.0,403.89 874.5,403.28 875.0,401.25 875.5,398.11 876.0,394.32 876.5,390.45 877.0,387.09 877.5,384.73 878.0,383.72 878.5,384.23 879.0,386.16 879.5,389.24 880.0,393.00 880.5,396.88 881.0,400.30 881.5,402.75 882.0,403.86 882.5,403.46 883.0,401.62 883.5,398.61 884.0,394.88 884.5,390.99 885.0,387.52 885.5,384.99 886.0,383.77 886.5,384.06 887.0,385.81 887.5,388.75 888.0,392.44 888.5,396.34 889.0,399.86 889.5,402.47 890.0,403.79 890.5,403.61 891.0,401.96 891.5,399.09 892.0,395.43 892.5,391.53 893.0,387.96 893.5,385.27 894.0,383.86 894.5,383.93 895.0,385.48 895.5,388.27 896.0,391.89 896.5,395.80 897.0,399.40 897.5,402.17 898.0,403.69 898.5,403.73 899.0,402.28 899.5,399.56 900.0,395.99 900.5,392.08 901.0,388.43 901.5,385.59 902.0,383.97 902.5,383.82 903.0,385.17 903.5,387.81 904.0,391.34 904.5,395.24 905.0,398.93 905.5,401.85 906.0,403.56 906.5,403.82 907.0,402.57 907.5,400.02 908.0,396.53 908.5,392.64 909.0,388.92 909.5,385.93 910.0,384.11 910.5,383.75 911.0,384.89 911.5,387.37 912.0,390.80 912.5,394.69 913.0,398.44 913.5,401.50 914.0,403.40 914.5,403.87 915.0,402.84 915.5,400.45 916.0,397.07 916.5,393.19 917.0,389.41 917.5,386.29 918.0,384.29 918.5,383.71 919.0,384.64 919.5,386.94 920.0,390.27 920.5,394.13 921.0,397.93 921.5,401.12 922.0,403.21 922.5,403.90 923.0,403.07 923.5,400.86 924.0,397.59 924.5,393.76 925.0,389.93 925.5,386.68 926.0,384.49 926.5,383.70 927.0,384.42 927.5,386.54 928.0,389.75 928.5,393.56 929.0,397.41 929.5,400.72 930.0,403.00 930.5,403.89 931.0,403.28 931.5,401.25 932.0,398.11 932.5,394.32 933.0,390.45 933.5,387.09 934.0,384.72 934.5,383.72 935.0,384.23 935.5,386.16 936.0,389.24 936.5,393.00 937.0,396.88 937.5,400.30 938.0,402.75 938.5,403.86 939.0,403.46 939.5,401.62 940.0,398.61 940.5,394.88 941.0,390.98 941.5,387.51 942.0,384.98 942.5,383.77 943.0,384.06 943.5,385.81 944.0,388.75 944.5,392.45 945.0,396.34 945.5,399.86 946.0,402.47 946.5,403.79 947.0,403.61 947.5,401.96 948.0,399.09 948.5,395.43 949.0,391.53 949.5,387.96 950.0,385.27 950.5,383.86 951.0,383.93 951.5,385.48 952.0,388.27 952.5,391.89 953.0,395.80 953.5,399.41 954.0,402.17 954.5,403.69 955.0,403.73 955.5,402.28 956.0,399.56 956.5,395.98 957.0,392.08 957.5,388.43 958.0,385.59 958.5,383.97 959.0,383.82 959.5,385.17 960.0,387.81 960.5,391.34 961.0,395.24 961.5,398.93 962.0,401.85 962.5,403.56 963.0,403.82 963.5,402.57 964.0,400.01 964.5,396.53 965.0,392.63 965.5,388.91 966.0,385.93 966.5,384.11 967.0,383.75 967.5,384.89 968.0,387.37 968.5,390.80 969.0,394.69 969.5,398.44 970.0,401.50 970.5,403.40 971.0,403.87 971.5,402.84 972.0,400.45 972.5,397.06 973.0,393.19 973.5,389.41 974.0,386.29 974.5,384.29 975.0,383.71 975.5,384.64 976.0,386.94 976.5,390.27 977.0,394.13 977.5,397.93 978.0,401.12 978.5,403.21 979.0,403.90 979.5,403.07 980.0,400.86 980.5,397.59 981.0,393.75 981.5,389.92 982.0,386.68 982.5,384.49 983.0,383.70 983.5,384.42 984.0,386.54 984.5,389.75 985.0,393.57 985.5,397.41 986.0,400.72 986.5,403.00 987.0,403.89 987.5,403.28 988.0,401.25 988.5,398.10 989.0,394.32 989.5,390.45 990.0,387.08 990.5,384.72 991.0,383.72 991.5,384.23 992.0,386.16 992.5,389.24 993.0,393.00 993.5,396.89 994.0,400.30 994.5,402.75 995.0,403.86 995.5,403.46 996.0,401.62 996.5,398.61 997.0,394.87 997.5,390.98 998.0,387.51 998.5,384.98 999.0,383.77 999.5,384.06 1000.0,385.81 1000.5,388.75 1001.0,392.45 1001.5,396.35 1002.0,399.86 1002.5,402.48 1003.0,403.79 1003.5,403.61 1004.0,401.96 1004.5,399.09 1005.0,395.43 1005.5,391.53 1006.0,387.96 1006.5,385.27 1007.0,383.86 1007.5,383.93 1008.0,385.48 1008.5,388.27 1009.0,391.89 1009.5,395.80 1010.0,399.41 1010.5,402.18 1011.0,403.69 1011.5,403.73 1012.0,402.28 1012.5,399.56 1013.0,395.98 1013.5,392.08 1014.0,388.43 1014.5,385.59 1015.0,383.97 1015.5,383.83 1016.0,385.17 1016.5,387.81 1017.0,391.34 1017.5,395.25 1018.0,398.93 1018.5,401.85 1019.0,403.56 1019.5,403.82 1020.0,402.57 1020.5,400.01 1021.0,396.53 1021.5,392.63 1022.0,388.91 1022.5,385.92 1023.0,384.11 1023.5,383.75 1024.0,384.89 1024.5,387.37 1025.0,390.80 1025.5,394.69 1026.0,398.44 1026.5,401.50 1027.0,403.40 1027.5,403.87 1028.0,402.83 1028.5,400.45 1029.0,397.06 1029.5,393.19 1030.0,389.41 1030.5,386.29 1031.0,384.29 1031.5,383.71 1032.0,384.64 1032.5,386.95 1033.0,390.27 1033.5,394.13 1034.0,397.93 1034.5,401.12 1035.0,403.21 1035.5,403.90 1036.0,403.07 1036.5,400.86 1037.0,397.59 1037.5,393.75 1038.0,389.92 1038.5,386.67 1039.0,384.49 1039.5,383.70 1040.0,384.42 1040.5,386.54 1041.0,389.75 1041.5,393.57 1042.0,397.42 1042.5,400.72 1043.0,403.00 1043.5,403.89 1044.0,403.28 1044.5,401.25 1045.0,398.10 1045.5,394.31 1046.0,390.45 1046.5,387.08 1047.0,384.72 1047.5,383.72 1048.0,384.23 1048.5,386.16 1049.0,389.24 1049.5,393.01 1050.0,396.89 1050.5,400.30 1051.0,402.75 1051.5,403.86 1052.0,403.46 1052.5,401.62 1053.0,398.60 1053.5,394.87 1054.0,390.98 1054.5,387.51 1055.0,384.98 1055.5,383.77 1056.0,384.06 1056.5,385.81 1057.0,388.75 1057.5,392.45 1058.0,396.35 1058.5,399.87 1059.0,402.48 1059.5,403.79 1060.0,403.61 1060.5,401.96 1061.0,399.09 1061.5,395.43 1062.0,391.53 1062.5,387.96 1063.0,385.27 1063.5,383.86 1064.0,383.93 1064.5,385.48 1065.0,388.27 1065.5,391.89 1066.0,395.80 1066.5,399.41 1067.0,402.18 1067.5,403.69 1068.0,403.73 1068.5,402.28 1069.0,399.56 1069.5,395.98 1070.0,392.08 1070.5,388.43 1071.0,385.58 1071.5,383.97 1072.0,383.83 1072.5,385.17 1073.0,387.81 1073.5,391.35 1074.0,395.25 1074.5,398.93 1075.0,401.85 1075.5,403.56 1076.0,403.81 1076.5,402.57 1077.0,400.01 1077.5,396.53 1078.0,392.63 1078.5,388.91 1079.0,385.92 1079.5,384.11 1080.0,383.75 1080.5,384.89 1081.0,387.37 1081.5,390.81 1082.0,394.69 1082.5,398.44 1083.0,401.50 1083.5,403.40 1084.0,403.87 1084.5,402.83 1085.0,400.44 1085.5,397.06 1086.0,393.19 1086.5,389.41 1087.0,386.29 1087.5,384.29 1088.0,383.71 1088.5,384.64 1089.0,386.95 1089.5,390.27 1090.0,394.13 1090.5,397.94 1091.0,401.12 1091.5,403.21 1092.0,403.90 1092.5,403.07 1093.0,400.86 1093.5,397.59 1094.0,393.75 1094.5,389.92 1095.0,386.67 1095.5,384.49 1096.0,383.70 1096.5,384.42 1097.0,386.55 1097.5,389.75 1098.0,393.57 1098.5,397.42 1099.0,400.73 1099.5,403.00 1100.0,403.89 1100.5,403.28 1101.0,401.25 1101.5,398.10 1102.0,394.31 1102.5,390.45 1103.0,387.08 1103.5,384.72 1104.0,383.72 1104.5,384.23 1105.0,386.17 1105.5,389.25 1106.0,393.01 1106.5,396.89 1107.0,400.31 1107.5,402.75 1108.0,403.86 1108.5,403.46 1109.0,401.61 1109.5,398.60 1110.0,394.87 1110.5,390.98 1111.0,387.51 1111.5,384.98 1112.0,383.77 1112.5,384.06 1113.0,385.81 1113.5,388.75 1114.0,392.45 1114.5,396.35 1115.0,399.87 1115.5,402.48 1116.0,403.79 1116.5,403.61 1117.0,401.96 1117.5,399.09 1118.0,395.43 1118.5,391.52 1119.0,387.96 1119.5,385.27 1120.0,383.86 1120.5,383.93 1121.0,385.48 1121.5,388.27 1122.0,391.90 1122.5,395.80 1123.0,399.41 1123.5,402.18 1124.0,403.69 1124.5,403.73 1125.0,402.28 1125.5,399.56 1126.0,395.98 1126.5,392.07 1127.0,388.43 1127.5,385.58 1128.0,383.97 1128.5,383.83 1129.0,385.17 1129.5,387.81 1130.0,391.35 1130.5,395.25 1131.0,398.93 1131.5,401.85 1132.0,403.56 1132.5,403.81 1133.0,402.57 1133.5,400.01 1134.0,396.52 1134.5,392.63 1135.0,388.91 1135.5,385.92 1136.0,384.11 1136.5,383.75 1137.0,384.90 1137.5,387.37 1138.0,390.81 1138.5,394.69 1139.0,398.44 1139.5,401.50 1140.0,403.40 1140.5,403.87 1141.0,402.83 1141.5,400.44 1142.0,397.06 1142.5,393.19 1143.0,389.41 1143.5,386.29 1144.0,384.29 1144.5,383.71 1145.0,384.64 1145.5,386.95 1146.0,390.28 1146.5,394.13 1147.0,397.94 1147.5,401.12 1148.0,403.22 1148.5,403.90 1149.0,403.07 1149.5,400.86 1150.0,397.59 1150.5,393.75 1151.0,389.92 1151.5,386.67 1152.0,384.49 1152.5,383.70 1153.0,384.42 1153.5,386.55 1154.0,389.76 1154.5,393.57 1155.0,397.42 1155.5,400.73 1156.0,403.00 1156.5,403.89 1157.0,403.28 1157.5,401.25 1158.0,398.10 1158.5,394.31 1159.0,390.44 1159.5,387.08 1160.0,384.72 1160.5,383.72 1161.0,384.23 1161.5,386.17 1162.0,389.25 1162.5,393.01 1163.0,396.89 1163.5,400.31 1164.0,402.75 1164.5,403.86 1165.0,403.46 1165.5,401.61 1166.0,398.60 1166.5,394.87 1167.0,390.98 1167.5,387.51 1168.0,384.98 1168.5,383.77 1169.0,384.06 1169.5,385.81 1170.0,388.75 1170.5,392.45 1171.0,396.35 1171.5,399.87 1172.0,402.48 1172.5,403.79 1173.0,403.61 1173.5,401.96 1174.0,399.09 1174.5,395.43 1175.0,391.52 1175.5,387.96 1176.0,385.27 1176.5,383.86 1177.0,383.93 1177.5,385.48 1178.0,388.28 1178.5,391.90 1179.0,395.80 1179.5,399.41 1180.0,402.18 1180.5,403.69 1181.0,403.73 1181.5,402.28 1182.0,399.56 1182.5,395.98 1183.0,392.07 1183.5,388.43 1184.0,385.58 1184.5,383.97 1185.0,383.83 1185.5,385.18 1186.0,387.81 1186.5,391.35 1187.0,395.25 1187.5,398.94 1188.0,401.85 1188.5,403.56 1189.0,403.81 1189.5,402.57 1190.0,400.01 1190.5,396.52 1191.0,392.63 1191.5,388.91 1192.0,385.92 1192.5,384.11 1193.0,383.75 1193.5,384.90 1194.0,387.37 1194.5,390.81 1195.0,394.69 1195.5,398.44 1196.0,401.50 1196.5,403.40 1197.0,403.87 1197.5,402.83 1198.0,400.44 1198.5,397.06 1199.0,393.19 1199.5,389.41 1200.0,386.28 1200.5,384.29 1201.0,383.71 1201.5,384.65 1202.0,386.95 1202.5,390.28 1203.0,394.13 1203.5,397.94 1204.0,401.13 1204.5,403.22 1205.0,403.90 1205.5,403.07 1206.0,400.85 1206.5,397.58 1207.0,393.75 1207.5,389.92 1208.0,386.67 1208.5,384.49 1209.0,383.70 1209.5,384.42 1210.0,386.55 1210.5,389.76 1211.0,393.57 1211.5,397.42 1212.0,400.73 1212.5,403.00 1213.0,403.89 1213.5,403.28 1214.0,401.25 1214.5,398.10 1215.0,394.31 1215.5,390.44 1216.0,387.08 1216.5,384.72 1217.0,383.72 1217.5,384.23 1218.0,386.17 1218.5,389.25 1219.0,393.01 1219.5,396.89 1220.0,400.31 1220.5,402.75 1221.0,403.86 1221.5,403.46 1222.0,401.61 1222.5,398.60 1223.0,394.87 1223.5,390.98 1224.0,387.51 1224.5,384.98 1225.0,383.77 1225.5,384.06 1226.0,385.81 1226.5,388.76 1227.0,392.45 1227.5,396.35 1228.0,399.87 1228.5,402.48 1229.0,403.79 1229.5,403.61 1230.0,401.96 1230.5,399.09 1231.0,395.42 1231.5,391.52 1232.0,387.96 1232.5,385.27 1233.0,383.86 1233.5,383.93 1234.0,385.48 1234.5,388.28 1235.0,391.90 1235.5,395.81 1236.0,399.41 1236.5,402.18 1237.0,403.69 1237.5,403.73 1238.0,402.27 1238.5,399.56 1239.0,395.98 1239.5,392.07 1240.0,388.42 1240.5,385.58 1241.0,383.97 1241.5,383.83 1242.0,385.18 1242.5,387.82 1243.0,391.35 1243.5,395.25 1244.0,398.94 1244.5,401.85 1245.0,403.56 1245.5,403.81 1246.0,402.57 1246.5,400.01 1247.0,396.52 1247.5,392.63 1248.0,388.91 1248.5,385.92 1249.0,384.11 1249.5,383.75 1250.0,384.90 1250.5,387.37 1251.0,390.81 1251.5,394.69 1252.0,398.45 1252.5,401.50 1253.0,403.40 1253.5,403.87 1254.0,402.83 1254.5,400.44 1255.0,397.06 1255.5,393.19 1256.0,389.41 1256.5,386.28 1257.0,384.29 1257.5,383.71 1258.0,384.65 1258.5,386.95 1259.0,390.28 1259.5,394.13 1260.0,397.94 1260.5,401.13 1261.0,403.22 1261.5,403.90 1262.0,403.07 1262.5,400.85 1263.0,397.58 1263.5,393.75 1264.0,389.92 1264.5,386.67 1265.0,384.49 1265.5,383.70 1266.0,384.42 1266.5,386.55 1267.0,389.76 1267.5,393.57 1268.0,397.42 1268.5,400.73 1269.0,403.00 1269.5,403.89 1270.0,403.28 1270.5,401.24 1271.0,398.10 1271.5,394.31 1272.0,390.44 1272.5,387.08 1273.0,384.72 1273.5,383.72 1274.0,384.23 1274.5,386.17 1275.0,389.25 1275.5,393.01 1276.0,396.89 1276.5,400.31 1277.0,402.75 1277.5,403.86 1278.0,403.46 1278.5,401.61 1279.0,398.60 1279.5,394.87 1280.0,390.98 1280.5,387.51 1281.0,384.98 1281.5,383.77 1282.0,384.06 1282.5,385.81 1283.0,388.76 1283.5,392.45 1284.0,396.35 1284.5,399.87 1285.0,402.48 1285.5,403.79 1286.0,403.61 1286.5,401.96 1287.0,399.08 1287.5,395.42 1288.0,391.52 1288.5,387.96 1289.0,385.27 1289.5,383.85 1290.0,383.93 1290.5,385.48 1291.0,388.28 1291.5,391.90 1292.0,395.81 1292.5,399.41 1293.0,402.18 1293.5,403.69 1294.0,403.73 1294.5,402.27 1295.0,399.55 1295.5,395.97 1296.0,392.07 1296.5,388.42 1297.0,385.58 1297.5,383.97 1298.0,383.83 1298.5,385.18 1299.0,387.82 1299.5,391.35 1300.0,395.25 1300.5,398.94 1301.0,401.85" fill="none" stroke="#008000" stroke-width="1.3" shape-rendering="crispEdges"/>
<polyline points="335.0,395.36 335.5,392.59 336.0,390.00 336.5,387.98 337.0,386.82 337.5,386.72 338.0,387.67 338.5,389.54 339.0,392.04 339.5,394.81 340.0,397.43 340.5,399.51 341.0,400.73 341.5,400.91 342.0,400.03 342.5,398.22 343.0,395.75 343.5,392.98 344.0,390.34 344.5,388.22 345.0,386.93 345.5,386.66 346.0,387.47 346.5,389.22 347.0,391.66 347.5,394.42 348.0,397.08 348.5,399.26 349.0,400.61 349.5,400.95 350.0,400.22 350.5,398.53 351.0,396.13 351.5,393.38 352.0,390.70 352.5,388.48 353.0,387.05 353.5,386.64 354.0,387.29 354.5,388.92 355.0,391.28 355.5,394.02 356.0,396.72 356.5,398.99 357.0,400.48 357.5,400.97 358.0,400.39 358.5,398.82 359.0,396.50 359.5,393.78 360.0,391.06 360.5,388.75 361.0,387.20 361.5,386.63 362.0,387.14 362.5,388.64 363.0,390.91 363.5,393.62 364.0,396.35 364.5,398.71 365.0,400.32 365.5,400.97 366.0,400.54 366.5,399.10 367.0,396.87 367.5,394.18 368.0,391.43 368.5,389.04 369.0,387.36 369.5,386.64 370.0,387.00 370.5,388.37 371.0,390.55 371.5,393.22 372.0,395.98 372.5,398.41 373.0,400.15 373.5,400.94 374.0,400.66 374.5,399.36 375.0,397.22 375.5,394.58 376.0,391.81 376.5,389.35 377.0,387.55 377.5,386.68 378.0,386.88 378.5,388.12 379.0,390.20 379.5,392.83 380.0,395.60 380.5,398.10 381.0,399.95 381.5,400.89 382.0,400.77 382.5,399.60 383.0,397.57 383.5,394.97 384.0,392.20 384.5,389.67 385.0,387.75 385.5,386.74 386.0,386.79 386.5,387.88 387.0,389.86 387.5,392.43 388.0,395.21 388.5,397.77 389.0,399.74 389.5,400.82 390.0,400.85 390.5,399.83 391.0,397.90 391.5,395.36 392.0,392.59 392.5,390.00 393.0,387.97 393.5,386.82 394.0,386.72 394.5,387.67 395.0,389.54 395.5,392.04 396.0,394.81 396.5,397.43 397.0,399.51 397.5,400.73 398.0,400.91 398.5,400.03 399.0,398.22 399.5,395.75 400.0,392.98 400.5,390.34 401.0,388.22 401.5,386.93 402.0,386.67 402.5,387.47 403.0,389.22 403.5,391.66 404.0,394.42 404.5,397.08 405.0,399.26 405.5,400.61 406.0,400.95 406.5,400.22 407.0,398.53 407.5,396.13 408.0,393.38 408.5,390.70 409.0,388.47 409.5,387.05 410.0,386.64 410.5,387.29 411.0,388.92 411.5,391.28 412.0,394.02 412.5,396.72 413.0,398.99 413.5,400.48 414.0,400.97 414.5,400.39 415.0,398.82 415.5,396.50 416.0,393.78 416.5,391.06 417.0,388.75 417.5,387.20 418.0,386.63 418.5,387.14 419.0,388.64 419.5,390.92 420.0,393.62 420.5,396.36 421.0,398.71 421.5,400.32 422.0,400.97 422.5,400.53 423.0,399.10 423.5,396.87 424.0,394.18 424.5,391.43 425.0,389.04 425.5,387.36 426.0,386.64 426.5,387.00 427.0,388.37 427.5,390.55 428.0,393.22 428.5,395.98 429.0,398.41 429.5,400.15 430.0,400.94 430.5,400.66 431.0,399.36 431.5,397.22 432.0,394.57 432.5,391.81 433.0,389.35 433.5,387.55 434.0,386.68 434.5,386.88 435.0,388.12 435.5,390.20 436.0,392.83 436.5,395.60 437.0,398.10 437.5,399.95 438.0,400.89 438.5,400.77 439.0,399.60 439.5,397.57 440.0,394.97 440.5,392.20 441.0,389.66 441.5,387.75 442.0,386.74 442.5,386.79 443.0,387.88 443.5,389.87 444.0,392.43 444.5,395.21 445.0,397.77 445.5,399.74 446.0,400.82 446.5,400.85 447.0,399.83 447.5,397.90 448.0,395.36 448.5,392.59 449.0,390.00 449.5,387.97 450.0,386.82 450.5,386.72 451.0,387.67 451.5,389.54 452.0,392.05 452.5,394.82 453.0,397.43 453.5,399.51 454.0,400.73 454.5,400.91 455.0,400.03 455.5,398.22 456.0,395.75 456.5,392.98 457.0,390.34 457.5,388.22 458.0,386.93 458.5,386.67 459.0,387.47 459.5,389.22 460.0,391.66 460.5,394.42 461.0,397.08 461.5,399.26 462.0,400.61 462.5,400.95 463.0,400.22 463.5,398.53 464.0,396.13 464.5,393.38 465.0,390.69 465.5,388.47 466.0,387.05 466.5,386.64 467.0,387.29 467.5,388.93 468.0,391.29 468.5,394.02 469.0,396.73 469.5,398.99 470.0,400.48 470.5,400.97 471.0,400.39 471.5,398.82 472.0,396.50 472.5,393.78 473.0,391.06 473.5,388.75 474.0,387.19 474.5,386.63 475.0,387.14 475.5,388.64 476.0,390.92 476.5,393.62 477.0,396.36 477.5,398.71 478.0,400.32 478.5,400.97 479.0,400.53 479.5,399.10 480.0,396.87 480.5,394.18 481.0,391.43 481.5,389.04 482.0,387.36 482.5,386.64 483.0,387.00 483.5,388.37 484.0,390.56 484.5,393.23 485.0,395.98 485.5,398.41 486.0,400.15 486.5,400.94 487.0,400.66 487.5,399.36 488.0,397.22 488.5,394.57 489.0,391.81 489.5,389.34 490.0,387.55 490.5,386.68 491.0,386.88 491.5,388.12 492.0,390.21 492.5,392.83 493.0,395.60 493.5,398.10 494.0,399.95 494.5,400.89 495.0,400.77 495.5,399.60 496.0,397.57 496.5,394.97 497.0,392.20 497.5,389.66 498.0,387.75 498.5,386.74 499.0,386.79 499.5,387.89 500.0,389.87 500.5,392.44 501.0,395.21 501.5,397.77 502.0,399.74 502.5,400.82 503.0,400.85 503.5,399.82 504.0,397.90 504.5,395.36 505.0,392.59 505.5,390.00 506.0,387.97 506.5,386.82 507.0,386.72 507.5,387.67 508.0,389.54 508.5,392.05 509.0,394.82 509.5,397.43 510.0,399.51 510.5,400.73 511.0,400.91 511.5,400.03 512.0,398.22 512.5,395.75 513.0,392.98 513.5,390.34 514.0,388.21 514.5,386.93 515.0,386.67 515.5,387.47 516.0,389.23 516.5,391.66 517.0,394.42 517.5,397.09 518.0,399.26 518.5,400.61 519.0,400.95 519.5,400.22 520.0,398.53 520.5,396.13 521.0,393.38 521.5,390.69 522.0,388.47 522.5,387.05 523.0,386.64 523.5,387.29 524.0,388.93 524.5,391.29 525.0,394.02 525.5,396.73 526.0,398.99 526.5,400.48 527.0,400.97 527.5,400.39 528.0,398.82 528.5,396.50 529.0,393.78 529.5,391.06 530.0,388.75 530.5,387.19 531.0,386.63 531.5,387.14 532.0,388.64 532.5,390.92 533.0,393.62 533.5,396.36 534.0,398.71 534.5,400.33 535.0,400.97 535.5,400.53 536.0,399.10 536.5,396.86 537.0,394.17 537.5,391.43 538.0,389.04 538.5,387.36 539.0,386.64 539.5,387.00 540.0,388.37 540.5,390.56 541.0,393.23 541.5,395.98 542.0,398.41 542.5,400.15 543.0,400.94 543.5,400.66 544.0,399.36 544.5,397.22 545.0,394.57 545.5,391.81 546.0,389.34 546.5,387.54 547.0,386.68 547.5,386.88 548.0,388.12 548.5,390.21 549.0,392.83 549.5,395.60 550.0,398.10 550.5,399.96 551.0,400.89 551.5,400.77 552.0,399.60 552.5,397.56 553.0,394.97 553.5,392.19 554.0,389.66 554.5,387.75 555.0,386.74 555.5,386.79 556.0,387.89 556.5,389.87 557.0,392.44 557.5,395.21 558.0,397.77 558.5,399.74 559.0,400.82 559.5,400.85 560.0,399.82 560.5,397.90 561.0,395.36 561.5,392.59 562.0,389.99 562.5,387.97 563.0,386.82 563.5,386.72 564.0,387.67 564.5,389.54 565.0,392.05 565.5,394.82 566.0,397.44 566.5,399.51 567.0,400.73 567.5,400.91 568.0,400.03 568.5,398.22 569.0,395.74 569.5,392.98 570.0,390.34 570.5,388.21 571.0,386.93 571.5,386.67 572.0,387.47 572.5,389.23 573.0,391.66 573.5,394.42 574.0,397.09 574.5,399.26 575.0,400.62 575.5,400.95 576.0,400.22 576.5,398.53 577.0,396.12 577.5,393.38 578.0,390.69 578.5,388.47 579.0,387.05 579.5,386.64 580.0,387.29 580.5,388.93 581.0,391.29 581.5,394.02 582.0,396.73 582.5,398.99 583.0,400.48 583.5,400.97 584.0,400.39 584.5,398.82 585.0,396.50 585.5,393.78 586.0,391.06 586.5,388.75 587.0,387.19 587.5,386.63 588.0,387.14 588.5,388.64 589.0,390.92 589.5,393.63 590.0,396.36 590.5,398.71 591.0,400.33 591.5,400.97 592.0,400.53 592.5,399.09 593.0,396.86 593.5,394.17 594.0,391.43 594.5,389.04 595.0,387.36 595.5,386.64 596.0,387.00 596.5,388.37 597.0,390.56 597.5,393.23 598.0,395.98 598.5,398.41 599.0,400.15 599.5,400.94 600.0,400.66 600.5,399.35 601.0,397.22 601.5,394.57 602.0,391.81 602.5,389.34 603.0,387.54 603.5,386.68 604.0,386.88 604.5,388.12 605.0,390.21 605.5,392.83 606.0,395.60 606.5,398.10 607.0,399.96 607.5,400.89 608.0,400.77 608.5,399.60 609.0,397.56 609.5,394.97 610.0,392.19 610.5,389.66 611.0,387.75 611.5,386.74 612.0,386.79 612.5,387.89 613.0,389.87 613.5,392.44 614.0,395.21 614.5,397.77 615.0,399.74 615.5,400.82 616.0,400.85 616.5,399.82 617.0,397.90 617.5,395.36 618.0,392.58 618.5,389.99 619.0,387.97 619.5,386.82 620.0,386.72 620.5,387.67 621.0,389.54 621.5,392.05 622.0,394.82 622.5,397.44 623.0,399.51 623.5,400.73 624.0,400.91 624.5,400.03 625.0,398.22 625.5,395.74 626.0,392.98 626.5,390.34 627.0,388.21 627.5,386.93 628.0,386.67 628.5,387.47 629.0,389.23 629.5,391.67 630.0,394.42 630.5,397.09 631.0,399.26 631.5,400.62 632.0,400.95 632.5,400.22 633.0,398.52 633.5,396.12 634.0,393.38 634.5,390.69 635.0,388.47 635.5,387.05 636.0,386.64 636.5,387.30 637.0,388.93 637.5,391.29 638.0,394.03 638.5,396.73 639.0,398.99 639.5,400.48 640.0,400.97 640.5,400.39 641.0,398.82 641.5,396.50 642.0,393.77 642.5,391.05 643.0,388.75 643.5,387.19 644.0,386.63 644.5,387.14 645.0,388.64 645.5,390.92 646.0,393.63 646.5,396.36 647.0,398.71 647.5,400.33 648.0,400.97 648.5,400.53 649.0,399.09 649.5,396.86 650.0,394.17 650.5,391.43 651.0,389.04 651.5,387.36 652.0,386.64 652.5,387.00 653.0,388.37 653.5,390.56 654.0,393.23 654.5,395.98 655.0,398.41 655.5,400.15 656.0,400.94 656.5,400.66 657.0,399.35 657.5,397.22 658.0,394.57 658.5,391.81 659.0,389.34 659.5,387.54 660.0,386.68 660.5,386.88 661.0,388.12 661.5,390.21 662.0,392.83 662.5,395.60 663.0,398.10 663.5,399.96 664.0,400.89 664.5,400.77 665.0,399.60 665.5,397.56 666.0,394.96 666.5,392.19 667.0,389.66 667.5,387.75 668.0,386.74 668.5,386.79 669.0,387.89 669.5,389.87 670.0,392.44 670.5,395.21 671.0,397.77 671.5,399.74 672.0,400.82 672.5,400.85 673.0,399.82 673.5,397.90 674.0,395.36 674.5,392.58 675.0,389.99 675.5,387.97 676.0,386.82 676.5,386.72 677.0,387.67 677.5,389.54 678.0,392.05 678.5,394.82 679.0,397.44 679.5,399.51 680.0,400.73 680.5,400.91 681.0,400.03 681.5,398.22 682.0,395.74 682.5,392.98 683.0,390.34 683.5,388.21 684.0,386.92 684.5,386.67 685.0,387.47 685.5,389.23 686.0,391.67 686.5,394.42 687.0,397.09 687.5,399.26 688.0,400.62 688.5,400.95 689.0,400.22 689.5,398.52 690.0,396.12 690.5,393.37 691.0,390.69 691.5,388.47 692.0,387.05 692.5,386.64 693.0,387.30 693.5,388.93 694.0,391.29 694.5,394.03 695.0,396.73 695.5,398.99 696.0,400.48 696.5,400.97 697.0,400.39 697.5,398.82 698.0,396.50 698.5,393.77 699.0,391.05 699.5,388.75 700.0,387.19 700.5,386.63 701.0,387.14 701.5,388.64 702.0,390.92 702.5,393.63 703.0,396.36 703.5,398.71 704.0,400.33 704.5,400.97 705.0,400.53 705.5,399.09 706.0,396.86 706.5,394.17 707.0,391.43 707.5,389.04 708.0,387.36 708.5,386.64 709.0,387.00 709.5,388.37 710.0,390.56 710.5,393.23 711.0,395.99 711.5,398.41 712.0,400.15 712.5,400.94 713.0,400.66 713.5,399.35 714.0,397.22 714.5,394.57 715.0,391.81 715.5,389.34 716.0,387.54 716.5,386.68 717.0,386.88 717.5,388.12 718.0,390.21 718.5,392.83 719.0,395.60 719.5,398.10 720.0,399.96 720.5,400.89 721.0,400.77 721.5,399.60 722.0,397.56 722.5,394.96 723.0,392.19 723.5,389.66 724.0,387.75 724.5,386.74 725.0,386.79 725.5,387.89 726.0,389.87 726.5,392.44 727.0,395.21 727.5,397.78 728.0,399.74 728.5,400.82 729.0,400.85 729.5,399.82 730.0,397.89 730.5,395.35 731.0,392.58 731.5,389.99 732.0,387.97 732.5,386.82 733.0,386.72 733.5,387.67 734.0,389.54 734.5,392.05 735.0,394.82 735.5,397.44 736.0,399.51 736.5,400.73 737.0,400.91 737.5,400.03 738.0,398.22 738.5,395.74 739.0,392.98 739.5,390.33 740.0,388.21 740.5,386.92 741.0,386.67 741.5,387.47 742.0,389.23 742.5,391.67 743.0,394.43 743.5,397.09 744.0,399.26 744.5,400.62 745.0,400.95 745.5,400.22 746.0,398.52 746.5,396.12 747.0,393.37 747.5,390.69 748.0,388.47 748.5,387.05 749.0,386.64 749.5,387.30 750.0,388.93 750.5,391.29 751.0,394.03 751.5,396.73 752.0,398.99 752.5,400.48 753.0,400.97 753.5,400.39 754.0,398.82 754.5,396.50 755.0,393.77 755.5,391.05 756.0,388.74 756.5,387.19 757.0,386.63 757.5,387.14 758.0,388.64 758.5,390.92 759.0,393.63 759.5,396.36 760.0,398.71 760.5,400.33 761.0,400.97 761.5,400.53 762.0,399.09 762.5,396.86 763.0,394.17 763.5,391.42 764.0,389.04 764.5,387.36 765.0,386.64 765.5,387.00 766.0,388.38 766.5,390.56 767.0,393.23 767.5,395.99 768.0,398.41 768.5,400.15 769.0,400.94 769.5,400.66 770.0,399.35 770.5,397.22 771.0,394.57 771.5,391.80 772.0,389.34 772.5,387.54 773.0,386.68 773.5,386.89 774.0,388.12 774.5,390.21 775.0,392.83 775.5,395.60 776.0,398.10 776.5,399.96 777.0,400.89 777.5,400.76 778.0,399.60 778.5,397.56 779.0,394.96 779.5,392.19 780.0,389.66 780.5,387.75 781.0,386.74 781.5,386.79 782.0,387.89 782.5,389.87 783.0,392.44 783.5,395.21 784.0,397.78 784.5,399.74 785.0,400.82 785.5,400.85 786.0,399.82 786.5,397.89 787.0,395.35 787.5,392.58 788.0,389.99 788.5,387.97 789.0,386.82 789.5,386.72 790.0,387.67 790.5,389.54 791.0,392.05 791.5,394.82 792.0,397.44 792.5,399.51 793.0,400.73 793.5,400.91 794.0,400.03 794.5,398.21 795.0,395.74 795.5,392.98 796.0,390.33 796.5,388.21 797.0,386.92 797.5,386.67 798.0,387.47 798.5,389.23 799.0,391.67 799.5,394.43 800.0,397.09 800.5,399.26 801.0,400.62 801.5,400.95 802.0,400.22 802.5,398.52 803.0,396.12 803.5,393.37 804.0,390.69 804.5,388.47 805.0,387.05 805.5,386.64 806.0,387.30 806.5,388.93 807.0,391.29 807.5,394.03 808.0,396.73 808.5,399.00 809.0,400.48 809.5,400.97 810.0,400.38 810.5,398.81 811.0,396.49 811.5,393.77 812.0,391.05 812.5,388.74 813.0,387.19 813.5,386.63 814.0,387.14 814.5,388.65 815.0,390.92 815.5,393.63 816.0,396.36 816.5,398.71 817.0,400.33 817.5,400.97 818.0,400.53 818.5,399.09 819.0,396.86 819.5,394.17 820.0,391.42 820.5,389.03 821.0,387.36 821.5,386.64 822.0,387.00 822.5,388.38 823.0,390.56 823.5,393.23 824.0,395.99 824.5,398.42 825.0,400.15 825.5,400.94 826.0,400.66 826.5,399.35 827.0,397.21 827.5,394.57 828.0,391.80 828.5,389.34 829.0,387.54 829.5,386.68 830.0,386.89 830.5,388.12 831.0,390.21 831.5,392.84 832.0,395.60 832.5,398.10 833.0,399.96 833.5,400.89 834.0,400.76 834.5,399.60 835.0,397.56 835.5,394.96 836.0,392.19 836.5,389.66 837.0,387.75 837.5,386.74 838.0,386.79 838.5,387.89 839.0,389.87 839.5,392.44 840.0,395.22 840.5,397.78 841.0,399.74 841.5,400.82 842.0,400.85 842.5,399.82 843.0,397.89 843.5,395.35 844.0,392.58 844.5,389.99 845.0,387.97 845.5,386.82 846.0,386.72 846.5,387.67 847.0,389.54 847.5,392.05 848.0,394.82 848.5,397.44 849.0,399.51 849.5,400.73 850.0,400.91 850.5,400.03 851.0,398.21 851.5,395.74 852.0,392.97 852.5,390.33 853.0,388.21 853.5,386.92 854.0,386.67 854.5,387.48 855.0,389.23 855.5,391.67 856.0,394.43 856.5,397.09 857.0,399.26 857.5,400.62 858.0,400.95 858.5,400.22 859.0,398.52 859.5,396.12 860.0,393.37 860.5,390.69 861.0,388.47 861.5,387.05 862.0,386.64 862.5,387.30 863.0,388.93 863.5,391.29 864.0,394.03 864.5,396.73 865.0,399.00 865.5,400.48 866.0,400.97 866.5,400.38 867.0,398.81 867.5,396.49 868.0,393.77 868.5,391.05 869.0,388.74 869.5,387.19 870.0,386.63 870.5,387.14 871.0,388.65 871.5,390.92 872.0,393.63 872.5,396.36 873.0,398.71 873.5,400.33 874.0,400.97 874.5,400.53 875.0,399.09 875.5,396.86 876.0,394.17 876.5,391.42 877.0,389.03 877.5,387.36 878.0,386.64 878.5,387.00 879.0,388.38 879.5,390.56 880.0,393.23 880.5,395.99 881.0,398.42 881.5,400.15 882.0,400.94 882.5,400.66 883.0,399.35 883.5,397.21 884.0,394.57 884.5,391.80 885.0,389.34 885.5,387.54 886.0,386.68 886.5,386.89 887.0,388.12 887.5,390.21 888.0,392.84 888.5,395.61 889.0,398.10 889.5,399.96 890.0,400.89 890.5,400.76 891.0,399.60 891.5,397.56 892.0,394.96 892.5,392.19 893.0,389.66 893.5,387.75 894.0,386.74 894.5,386.79 895.0,387.89 895.5,389.87 896.0,392.44 896.5,395.22 897.0,397.78 897.5,399.75 898.0,400.82 898.5,400.85 899.0,399.82 899.5,397.89 900.0,395.35 900.5,392.58 901.0,389.99 901.5,387.97 902.0,386.82 902.5,386.72 903.0,387.67 903.5,389.55 904.0,392.05 904.5,394.82 905.0,397.44 905.5,399.51 906.0,400.73 906.5,400.91 907.0,400.03 907.5,398.21 908.0,395.74 908.5,392.97 909.0,390.33 909.5,388.21 910.0,386.92 910.5,386.67 911.0,387.48 911.5,389.23 912.0,391.67 912.5,394.43 913.0,397.09 913.5,399.26 914.0,400.62 914.5,400.95 915.0,400.22 915.5,398.52 916.0,396.12 916.5,393.37 917.0,390.69 917.5,388.47 918.0,387.05 918.5,386.64 919.0,387.30 919.5,388.93 920.0,391.29 920.5,394.03 921.0,396.73 921.5,399.00 922.0,400.48 922.5,400.97 923.0,400.38 923.5,398.81 924.0,396.49 924.5,393.77 925.0,391.05 925.5,388.74 926.0,387.19 926.5,386.63 927.0,387.14 927.5,388.65 928.0,390.92 928.5,393.63 929.0,396.37 929.5,398.71 930.0,400.33 930.5,400.97 931.0,400.53 931.5,399.09 932.0,396.86 932.5,394.17 933.0,391.42 933.5,389.03 934.0,387.36 934.5,386.64 935.0,387.00 935.5,388.38 936.0,390.56 936.5,393.23 937.0,395.99 937.5,398.42 938.0,400.15 938.5,400.94 939.0,400.66 939.5,399.35 940.0,397.21 940.5,394.56 941.0,391.80 941.5,389.34 942.0,387.54 942.5,386.68 943.0,386.89 943.5,388.13 944.0,390.21 944.5,392.84 945.0,395.61 945.5,398.10 946.0,399.96 946.5,400.89 947.0,400.76 947.5,399.59 948.0,397.56 948.5,394.96 949.0,392.19 949.5,389.66 950.0,387.75 950.5,386.74 951.0,386.79 951.5,387.89 952.0,389.87 952.5,392.44 953.0,395.22 953.5,397.78 954.0,399.75 954.5,400.82 955.0,400.85 955.5,399.82 956.0,397.89 956.5,395.35 957.0,392.58 957.5,389.99 958.0,387.97 958.5,386.82 959.0,386.72 959.5,387.67 960.0,389.55 960.5,392.06 961.0,394.83 961.5,397.44 962.0,399.51 962.5,400.73 963.0,400.91 963.5,400.03 964.0,398.21 964.5,395.74 965.0,392.97 965.5,390.33 966.0,388.21 966.5,386.92 967.0,386.67 967.5,387.48 968.0,389.23 968.5,391.67 969.0,394.43 969.5,397.09 970.0,399.26 970.5,400.62 971.0,400.95 971.5,400.22 972.0,398.52 972.5,396.12 973.0,393.37 973.5,390.68 974.0,388.47 974.5,387.05 975.0,386.64 975.5,387.30 976.0,388.93 976.5,391.29 977.0,394.03 977.5,396.73 978.0,399.00 978.5,400.48 979.0,400.97 979.5,400.38 980.0,398.81 980.5,396.49 981.0,393.77 981.5,391.05 982.0,388.74 982.5,387.19 983.0,386.63 983.5,387.14 984.0,388.65 984.5,390.93 985.0,393.63 985.5,396.37 986.0,398.72 986.5,400.33 987.0,400.97 987.5,400.53 988.0,399.09 988.5,396.86 989.0,394.17 989.5,391.42 990.0,389.03 990.5,387.36 991.0,386.64 991.5,387.00 992.0,388.38 992.5,390.56 993.0,393.24 993.5,395.99 994.0,398.42 994.5,400.15 995.0,400.94 995.5,400.66 996.0,399.35 996.5,397.21 997.0,394.56 997.5,391.80 998.0,389.34 998.5,387.54 999.0,386.68 999.5,386.89 1000.0,388.13 1000.5,390.21 1001.0,392.84 1001.5,395.61 1002.0,398.11 1002.5,399.96 1003.0,400.89 1003.5,400.76 1004.0,399.59 1004.5,397.56 1005.0,394.96 1005.5,392.19 1006.0,389.66 1006.5,387.74 1007.0,386.74 1007.5,386.79 1008.0,387.89 1008.5,389.87 1009.0,392.45 1009.5,395.22 1010.0,397.78 1010.5,399.75 1011.0,400.82 1011.5,400.85 1012.0,399.82 1012.5,397.89 1013.0,395.35 1013.5,392.58 1014.0,389.99 1014.5,387.97 1015.0,386.82 1015.5,386.72 1016.0,387.67 1016.5,389.55 1017.0,392.06 1017.5,394.83 1018.0,397.44 1018.5,399.51 1019.0,400.73 1019.5,400.91 1020.0,400.03 1020.5,398.21 1021.0,395.74 1021.5,392.97 1022.0,390.33 1022.5,388.21 1023.0,386.92 1023.5,386.67 1024.0,387.48 1024.5,389.23 1025.0,391.67 1025.5,394.43 1026.0,397.09 1026.5,399.26 1027.0,400.62 1027.5,400.95 1028.0,400.21 1028.5,398.52 1029.0,396.12 1029.5,393.37 1030.0,390.68 1030.5,388.47 1031.0,387.05 1031.5,386.64 1032.0,387.30 1032.5,388.93 1033.0,391.30 1033.5,394.03 1034.0,396.74 1034.5,399.00 1035.0,400.48 1035.5,400.97 1036.0,400.38 1036.5,398.81 1037.0,396.49 1037.5,393.77 1038.0,391.05 1038.5,388.74 1039.0,387.19 1039.5,386.63 1040.0,387.14 1040.5,388.65 1041.0,390.93 1041.5,393.63 1042.0,396.37 1042.5,398.72 1043.0,400.33 1043.5,400.97 1044.0,400.53 1044.5,399.09 1045.0,396.86 1045.5,394.16 1046.0,391.42 1046.5,389.03 1047.0,387.36 1047.5,386.64 1048.0,387.00 1048.5,388.38 1049.0,390.57 1049.5,393.24 1050.0,395.99 1050.5,398.42 1051.0,400.15 1051.5,400.94 1052.0,400.66 1052.5,399.35 1053.0,397.21 1053.5,394.56 1054.0,391.80 1054.5,389.34 1055.0,387.54 1055.5,386.68 1056.0,386.89 1056.5,388.13 1057.0,390.22 1057.5,392.84 1058.0,395.61 1058.5,398.11 1059.0,399.96 1059.5,400.89 1060.0,400.76 1060.5,399.59 1061.0,397.56 1061.5,394.96 1062.0,392.18 1062.5,389.65 1063.0,387.74 1063.5,386.74 1064.0,386.79 1064.5,387.89 1065.0,389.88 1065.5,392.45 1066.0,395.22 1066.5,397.78 1067.0,399.75 1067.5,400.82 1068.0,400.85 1068.5,399.82 1069.0,397.89 1069.5,395.35 1070.0,392.58 1070.5,389.99 1071.0,387.97 1071.5,386.82 1072.0,386.72 1072.5,387.68 1073.0,389.55 1073.5,392.06 1074.0,394.83 1074.5,397.44 1075.0,399.52 1075.5,400.73 1076.0,400.91 1076.5,400.03 1077.0,398.21 1077.5,395.73 1078.0,392.97 1078.5,390.33 1079.0,388.21 1079.5,386.92 1080.0,386.67 1080.5,387.48 1081.0,389.23 1081.5,391.67 1082.0,394.43 1082.5,397.10 1083.0,399.27 1083.5,400.62 1084.0,400.95 1084.5,400.21 1085.0,398.52 1085.5,396.12 1086.0,393.37 1086.5,390.68 1087.0,388.47 1087.5,387.05 1088.0,386.64 1088.5,387.30 1089.0,388.93 1089.5,391.30 1090.0,394.03 1090.5,396.74 1091.0,399.00 1091.5,400.48 1092.0,400.97 1092.5,400.38 1093.0,398.81 1093.5,396.49 1094.0,393.77 1094.5,391.05 1095.0,388.74 1095.5,387.19 1096.0,386.63 1096.5,387.14 1097.0,388.65 1097.5,390.93 1098.0,393.64 1098.5,396.37 1099.0,398.72 1099.5,400.33 1100.0,400.97 1100.5,400.53 1101.0,399.09 1101.5,396.85 1102.0,394.16 1102.5,391.42 1103.0,389.03 1103.5,387.35 1104.0,386.64 1104.5,387.00 1105.0,388.38 1105.5,390.57 1106.0,393.24 1106.5,395.99 1107.0,398.42 1107.5,400.16 1108.0,400.94 1108.5,400.66 1109.0,399.35 1109.5,397.21 1110.0,394.56 1110.5,391.80 1111.0,389.33 1111.5,387.54 1112.0,386.68 1112.5,386.89 1113.0,388.13 1113.5,390.22 1114.0,392.84 1114.5,395.61 1115.0,398.11 1115.5,399.96 1116.0,400.89 1116.5,400.76 1117.0,399.59 1117.5,397.55 1118.0,394.96 1118.5,392.18 1119.0,389.65 1119.5,387.74 1120.0,386.74 1120.5,386.79 1121.0,387.89 1121.5,389.88 1122.0,392.45 1122.5,395.22 1123.0,397.78 1123.5,399.75 1124.0,400.82 1124.5,400.85 1125.0,399.82 1125.5,397.89 1126.0,395.35 1126.5,392.57 1127.0,389.98 1127.5,387.97 1128.0,386.82 1128.5,386.72 1129.0,387.68 1129.5,389.55 1130.0,392.06 1130.5,394.83 1131.0,397.44 1131.5,399.52 1132.0,400.73 1132.5,400.91 1133.0,400.03 1133.5,398.21 1134.0,395.73 1134.5,392.97 1135.0,390.33 1135.5,388.21 1136.0,386.92 1136.5,386.67 1137.0,387.48 1137.5,389.24 1138.0,391.68 1138.5,394.43 1139.0,397.10 1139.5,399.27 1140.0,400.62 1140.5,400.95 1141.0,400.21 1141.5,398.52 1142.0,396.11 1142.5,393.37 1143.0,390.68 1143.5,388.46 1144.0,387.05 1144.5,386.64 1145.0,387.30 1145.5,388.93 1146.0,391.30 1146.5,394.04 1147.0,396.74 1147.5,399.00 1148.0,400.48 1148.5,400.97 1149.0,400.38 1149.5,398.81 1150.0,396.49 1150.5,393.76 1151.0,391.05 1151.5,388.74 1152.0,387.19 1152.5,386.63 1153.0,387.14 1153.5,388.65 1154.0,390.93 1154.5,393.64 1155.0,396.37 1155.5,398.72 1156.0,400.33 1156.5,400.97 1157.0,400.53 1157.5,399.09 1158.0,396.85 1158.5,394.16 1159.0,391.42 1159.5,389.03 1160.0,387.35 1160.5,386.64 1161.0,387.00 1161.5,388.38 1162.0,390.57 1162.5,393.24 1163.0,395.99 1163.5,398.42 1164.0,400.16 1164.5,400.94 1165.0,400.66 1165.5,399.35 1166.0,397.21 1166.5,394.56 1167.0,391.80 1167.5,389.33 1168.0,387.54 1168.5,386.68 1169.0,386.89 1169.5,388.13 1170.0,390.22 1170.5,392.84 1171.0,395.61 1171.5,398.11 1172.0,399.96 1172.5,400.89 1173.0,400.76 1173.5,399.59 1174.0,397.55 1174.5,394.95 1175.0,392.18 1175.5,389.65 1176.0,387.74 1176.5,386.74 1177.0,386.79 1177.5,387.89 1178.0,389.88 1178.5,392.45 1179.0,395.22 1179.5,397.78 1180.0,399.75 1180.5,400.82 1181.0,400.85 1181.5,399.82 1182.0,397.89 1182.5,395.35 1183.0,392.57 1183.5,389.98 1184.0,387.97 1184.5,386.82 1185.0,386.72 1185.5,387.68 1186.0,389.55 1186.5,392.06 1187.0,394.83 1187.5,397.45 1188.0,399.52 1188.5,400.73 1189.0,400.91 1189.5,400.03 1190.0,398.21 1190.5,395.73 1191.0,392.97 1191.5,390.33 1192.0,388.21 1192.5,386.92 1193.0,386.67 1193.5,387.48 1194.0,389.24 1194.5,391.68 1195.0,394.43 1195.5,397.10 1196.0,399.27 1196.5,400.62 1197.0,400.95 1197.5,400.21 1198.0,398.52 1198.5,396.11 1199.0,393.36 1199.5,390.68 1200.0,388.46 1200.5,387.05 1201.0,386.64 1201.5,387.30 1202.0,388.94 1202.5,391.30 1203.0,394.04 1203.5,396.74 1204.0,399.00 1204.5,400.49 1205.0,400.97 1205.5,400.38 1206.0,398.81 1206.5,396.49 1207.0,393.76 1207.5,391.04 1208.0,388.74 1208.5,387.19 1209.0,386.63 1209.5,387.14 1210.0,388.65 1210.5,390.93 1211.0,393.64 1211.5,396.37 1212.0,398.72 1212.5,400.33 1213.0,400.97 1213.5,400.53 1214.0,399.09 1214.5,396.85 1215.0,394.16 1215.5,391.42 1216.0,389.03 1216.5,387.35 1217.0,386.64 1217.5,387.00 1218.0,388.38 1218.5,390.57 1219.0,393.24 1219.5,395.99 1220.0,398.42 1220.5,400.16 1221.0,400.94 1221.5,400.66 1222.0,399.35 1222.5,397.21 1223.0,394.56 1223.5,391.80 1224.0,389.33 1224.5,387.54 1225.0,386.68 1225.5,386.89 1226.0,388.13 1226.5,390.22 1227.0,392.84 1227.5,395.61 1228.0,398.11 1228.5,399.96 1229.0,400.89 1229.5,400.76 1230.0,399.59 1230.5,397.55 1231.0,394.95 1231.5,392.18 1232.0,389.65 1232.5,387.74 1233.0,386.74 1233.5,386.79 1234.0,387.89 1234.5,389.88 1235.0,392.45 1235.5,395.22 1236.0,397.78 1236.5,399.75 1237.0,400.82 1237.5,400.85 1238.0,399.82 1238.5,397.89 1239.0,395.34 1239.5,392.57 1240.0,389.98 1240.5,387.96 1241.0,386.82 1241.5,386.72 1242.0,387.68 1242.5,389.55 1243.0,392.06 1243.5,394.83 1244.0,397.45 1244.5,399.52 1245.0,400.73 1245.5,400.91 1246.0,400.02 1246.5,398.21 1247.0,395.73 1247.5,392.97 1248.0,390.33 1248.5,388.21 1249.0,386.92 1249.5,386.67 1250.0,387.48 1250.5,389.24 1251.0,391.68 1251.5,394.44 1252.0,397.10 1252.5,399.27 1253.0,400.62 1253.5,400.95 1254.0,400.21 1254.5,398.52 1255.0,396.11 1255.5,393.36 1256.0,390.68 1256.5,388.46 1257.0,387.04 1257.5,386.64 1258.0,387.30 1258.5,388.94 1259.0,391.30 1259.5,394.04 1260.0,396.74 1260.5,399.00 1261.0,400.49 1261.5,400.97 1262.0,400.38 1262.5,398.81 1263.0,396.49 1263.5,393.76 1264.0,391.04 1264.5,388.74 1265.0,387.19 1265.5,386.63 1266.0,387.14 1266.5,388.65 1267.0,390.93 1267.5,393.64 1268.0,396.37 1268.5,398.72 1269.0,400.33 1269.5,400.97 1270.0,400.53 1270.5,399.09 1271.0,396.85 1271.5,394.16 1272.0,391.42 1272.5,389.03 1273.0,387.35 1273.5,386.64 1274.0,387.00 1274.5,388.38 1275.0,390.57 1275.5,393.24 1276.0,396.00 1276.5,398.42 1277.0,400.16 1277.5,400.94 1278.0,400.66 1278.5,399.35 1279.0,397.21 1279.5,394.56 1280.0,391.79 1280.5,389.33 1281.0,387.54 1281.5,386.68 1282.0,386.89 1282.5,388.13 1283.0,390.22 1283.5,392.84 1284.0,395.61 1284.5,398.11 1285.0,399.96 1285.5,400.89 1286.0,400.76 1286.5,399.59 1287.0,397.55 1287.5,394.95 1288.0,392.18 1288.5,389.65 1289.0,387.74 1289.5,386.74 1290.0,386.79 1290.5,387.89 1291.0,389.88 1291.5,392.45 1292.0,395.22 1292.5,397.79 1293.0,399.75 1293.5,400.82 1294.0,400.85 1294.5,399.82 1295.0,397.89 1295.5,395.34 1296.0,392.57 1296.5,389.98 1297.0,387.96 1297.5,386.82 1298.0,386.72 1298.5,387.68 1299.0,389.55 1299.5,392.06 1300.0,394.83 1300.5,397.45 1301.0,399.52" fill="none" stroke="#000080" stroke-width="1.3" shape-rendering="crispEdges"/>
<rect x="335.5" y="333.5" width="966" height="121" fill="none" stroke="#000" stroke-width="1"/>
<line x1="331" y1="333.5" x2="335" y2="333.5" stroke="#000"/>
<line x1="333" y1="337.5" x2="335" y2="337.5" stroke="#000"/>
<line x1="333" y1="341.5" x2="335" y2="341.5" stroke="#000"/>
<line x1="333" y1="345.5" x2="335" y2="345.5" stroke="#000"/>
<line x1="333" y1="349.5" x2="335" y2="349.5" stroke="#000"/>
<line x1="331" y1="353.5" x2="335" y2="353.5" stroke="#000"/>
<line x1="333" y1="357.5" x2="335" y2="357.5" stroke="#000"/>
<line x1="333" y1="361.5" x2="335" y2="361.5" stroke="#000"/>
<line x1="333" y1="365.5" x2="335" y2="365.5" stroke="#000"/>
<line x1="333" y1="369.5" x2="335" y2="369.5" stroke="#000"/>
<line x1="331" y1="373.5" x2="335" y2="373.5" stroke="#000"/>
<line x1="333" y1="377.5" x2="335" y2="377.5" stroke="#000"/>
<line x1="333" y1="381.5" x2="335" y2="381.5" stroke="#000"/>
<line x1="333" y1="386.5" x2="335" y2="386.5" stroke="#000"/>
<line x1="333" y1="390.5" x2="335" y2="390.5" stroke="#000"/>
<line x1="331" y1="394.5" x2="335" y2="394.5" stroke="#000"/>
<line x1="333" y1="398.5" x2="335" y2="398.5" stroke="#000"/>
<line x1="333" y1="402.5" x2="335" y2="402.5" stroke="#000"/>
<line x1="333" y1="406.5" x2="335" y2="406.5" stroke="#000"/>
<line x1="333" y1="410.5" x2="335" y2="410.5" stroke="#000"/>
<line x1="331" y1="414.5" x2="335" y2="414.5" stroke="#000"/>
<line x1="333" y1="418.5" x2="335" y2="418.5" stroke="#000"/>
<line x1="333" y1="422.5" x2="335" y2="422.5" stroke="#000"/>
<line x1="333" y1="426.5" x2="335" y2="426.5" stroke="#000"/>
<line x1="333" y1="430.5" x2="335" y2="430.5" stroke="#000"/>
<line x1="331" y1="434.5" x2="335" y2="434.5" stroke="#000"/>
<line x1="333" y1="438.5" x2="335" y2="438.5" stroke="#000"/>
<line x1="333" y1="442.5" x2="335" y2="442.5" stroke="#000"/>
<line x1="333" y1="446.5" x2="335" y2="446.5" stroke="#000"/>
<line x1="333" y1="450.5" x2="335" y2="450.5" stroke="#000"/>
<line x1="331" y1="454.5" x2="335" y2="454.5" stroke="#000"/>
<line x1="335.5" y1="451" x2="335.5" y2="458" stroke="#000"/>
<line x1="367.5" y1="454" x2="367.5" y2="456" stroke="#000"/>
<line x1="399.5" y1="454" x2="399.5" y2="456" stroke="#000"/>
<line x1="432.5" y1="454" x2="432.5" y2="456" stroke="#000"/>
<line x1="464.5" y1="454" x2="464.5" y2="456" stroke="#000"/>
<line x1="496.5" y1="451" x2="496.5" y2="458" stroke="#000"/>
<line x1="528.5" y1="454" x2="528.5" y2="456" stroke="#000"/>
<line x1="560.5" y1="454" x2="560.5" y2="456" stroke="#000"/>
<line x1="593.5" y1="454" x2="593.5" y2="456" stroke="#000"/>
<line x1="625.5" y1="454" x2="625.5" y2="456" stroke="#000"/>
<line x1="657.5" y1="451" x2="657.5" y2="458" stroke="#000"/>
<line x1="689.5" y1="454" x2="689.5" y2="456" stroke="#000"/>
<line x1="721.5" y1="454" x2="721.5" y2="456" stroke="#000"/>
<line x1="754.5" y1="454" x2="754.5" y2="456" stroke="#000"/>
<line x1="786.5" y1="454" x2="786.5" y2="456" stroke="#000"/>
<line x1="818.5" y1="451" x2="818.5" y2="458" stroke="#000"/>
<line x1="850.5" y1="454" x2="850.5" y2="456" stroke="#000"/>
<line x1="882.5" y1="454" x2="882.5" y2="456" stroke="#000"/>
<line x1="915.5" y1="454" x2="915.5" y2="456" stroke="#000"/>
<line x1="947.5" y1="454" x2="947.5" y2="456" stroke="#000"/>
<line x1="979.5" y1="451" x2="979.5" y2="458" stroke="#000"/>
<line x1="1011.5" y1="454" x2="1011.5" y2="456" stroke="#000"/>
<line x1="1043.5" y1="454" x2="1043.5" y2="456" stroke="#000"/>
<line x1="1076.5" y1="454" x2="1076.5" y2="456" stroke="#000"/>
<line x1="1108.5" y1="454" x2="1108.5" y2="456" stroke="#000"/>
<line x1="1140.5" y1="451" x2="1140.5" y2="458" stroke="#000"/>
<line x1="1172.5" y1="454" x2="1172.5" y2="456" stroke="#000"/>
<line x1="1204.5" y1="454" x2="1204.5" y2="456" stroke="#000"/>
<line x1="1237.5" y1="454" x2="1237.5" y2="456" stroke="#000"/>
<line x1="1269.5" y1="454" x2="1269.5" y2="456" stroke="#000"/>
<line x1="1301.5" y1="451" x2="1301.5" y2="458" stroke="#000"/>
<text x="329.5" y="337.6" font-size="12.5" text-anchor="end" fill="#000" >6</text>
<text x="329.5" y="357.6" font-size="12.5" text-anchor="end" fill="#000" >4</text>
<text x="329.5" y="377.6" font-size="12.5" text-anchor="end" fill="#000" >2</text>
<text x="329.5" y="398.6" font-size="12.5" text-anchor="end" fill="#000" >0</text>
<text x="329.5" y="418.6" font-size="12.5" text-anchor="end" fill="#000" >-2</text>
<text x="329.5" y="438.6" font-size="12.5" text-anchor="end" fill="#000" >-4</text>
<text x="329.5" y="458.6" font-size="12.5" text-anchor="end" fill="#000" >-6</text>
<text x="335.5" y="469.2" font-size="12.5" text-anchor="middle" fill="#000" >0</text>
<text x="496.5" y="469.2" font-size="12.5" text-anchor="middle" fill="#000" >10</text>
<text x="657.5" y="469.2" font-size="12.5" text-anchor="middle" fill="#000" >20</text>
<text x="818.5" y="469.2" font-size="12.5" text-anchor="middle" fill="#000" >30</text>
<text x="979.5" y="469.2" font-size="12.5" text-anchor="middle" fill="#000" >40</text>
<text x="1140.5" y="469.2" font-size="12.5" text-anchor="middle" fill="#000" >50</text>
<text x="1301.5" y="469.2" font-size="12.5" text-anchor="middle" fill="#000" >60</text>
<text x="818.5" y="485.5" font-size="16" text-anchor="middle">Time (ms)</text>
<text transform="translate(307.7,394) rotate(-90)" font-size="16" text-anchor="middle">Acceleration (G)</text>
<text x="1305" y="343" font-size="11" text-anchor="start" fill="#008000" >Ch1</text>
<text x="1305" y="363" font-size="11" text-anchor="start" fill="#22227f" >Ch2</text>
<rect x="335.5" y="522.5" width="966" height="122" fill="#fff" stroke="none"/>
<text x="808" y="514.6" font-size="18.3" font-weight="bold" text-anchor="middle" fill="#008000">Displacement Profile</text>
<line x1="336" y1="529.5" x2="1301" y2="529.5" stroke="#c4c4c4" stroke-dasharray="3,3"/>
<line x1="336" y1="554.5" x2="1301" y2="554.5" stroke="#c4c4c4" stroke-dasharray="3,3"/>
<line x1="336" y1="578.5" x2="1301" y2="578.5" stroke="#c4c4c4" stroke-dasharray="3,3"/>
<line x1="336" y1="603.5" x2="1301" y2="603.5" stroke="#c4c4c4" stroke-dasharray="3,3"/>
<line x1="336" y1="627.5" x2="1301" y2="627.5" stroke="#c4c4c4" stroke-dasharray="3,3"/>
<line x1="673.5" y1="523" x2="673.5" y2="644" stroke="#c4c4c4" stroke-dasharray="3,3"/>
<line x1="1156.5" y1="523" x2="1156.5" y2="644" stroke="#c4c4c4" stroke-dasharray="3,3"/>
<polyline points="335.0,530.34 818.0,579.34 1301.0,628.34" fill="none" stroke="#ff0000" stroke-width="1" shape-rendering="crispEdges"/>
<polyline points="335.0,545.09 818.0,594.09 1301.0,643.00" fill="none" stroke="#ff0000" stroke-width="1" shape-rendering="crispEdges"/>
<polyline points="335.0,534.03 818.0,583.03 1301.0,632.03" fill="none" stroke="#808000" stroke-width="1" stroke-dasharray="18,6" shape-rendering="crispEdges"/>
<polyline points="335.0,541.40 818.0,590.40 1301.0,639.40" fill="none" stroke="#808000" stroke-width="1" stroke-dasharray="18,6" shape-rendering="crispEdges"/>
<polyline points="335.0,537.71 818.0,586.71 1301.0,635.71" fill="none" stroke="#008000" stroke-width="1" shape-rendering="crispEdges"/>
<polyline points="335.0,537.71 336.4,537.85 337.8,537.99 339.1,538.13 340.5,538.27 341.9,538.41 343.3,538.55 344.7,538.69 346.0,538.83 347.4,538.97 348.8,539.11 350.2,539.25 351.6,539.39 352.9,539.53 354.3,539.67 355.7,539.81 357.1,539.95 358.5,540.09 359.8,540.23 361.2,540.37 362.6,540.51 364.0,540.65 365.4,540.79 366.7,540.93 368.1,541.07 369.5,541.21 370.9,541.35 372.3,541.49 373.6,541.63 375.0,541.77 376.4,541.91 377.8,542.05 379.2,542.19 380.5,542.33 381.9,542.47 383.3,542.61 384.7,542.75 386.1,542.89 387.4,543.03 388.8,543.17 390.2,543.31 391.6,543.45 393.0,543.59 394.3,543.73 395.7,543.87 397.1,544.01 398.5,544.15 399.9,544.29 401.2,544.43 402.6,544.57 404.0,544.71 405.4,544.85 406.8,544.99 408.1,545.13 409.5,545.27 410.9,545.41 412.3,545.55 413.7,545.69 415.0,545.83 416.4,545.97 417.8,546.11 419.2,546.25 420.6,546.39 421.9,546.53 423.3,546.67 424.7,546.81 426.1,546.95 427.5,547.09 428.8,547.23 430.2,547.37 431.6,547.51 433.0,547.65 434.4,547.79 435.7,547.93 437.1,548.07 438.5,548.21 439.9,548.35 441.3,548.49 442.6,548.63 444.0,548.77 445.4,548.91 446.8,549.05 448.2,549.19 449.5,549.33 450.9,549.47 452.3,549.61 453.7,549.75 455.1,549.89 456.4,550.03 457.8,550.17 459.2,550.31 460.6,550.45 462.0,550.59 463.3,550.73 464.7,550.87 466.1,551.01 467.5,551.15 468.9,551.29 470.2,551.43 471.6,551.57 473.0,551.71 474.4,551.85 475.8,551.99 477.1,552.13 478.5,552.27 479.9,552.41 481.3,552.55 482.7,552.69 484.0,552.83 485.4,552.97 486.8,553.11 488.2,553.25 489.6,553.39 490.9,553.53 492.3,553.67 493.7,553.81 495.1,553.95 496.5,554.09 497.8,554.23 499.2,554.37 500.6,554.51 502.0,554.65 503.4,554.79 504.7,554.93 506.1,555.07 507.5,555.21 508.9,555.35 510.3,555.49 511.6,555.63 513.0,555.77 514.4,555.91 515.8,556.05 517.2,556.19 518.5,556.33 519.9,556.47 521.3,556.61 522.7,556.75 524.1,556.89 525.4,557.03 526.8,557.17 528.2,557.31 529.6,557.45 531.0,557.59 532.3,557.73 533.7,557.87 535.1,558.01 536.5,558.15 537.9,558.29 539.2,558.43 540.6,558.57 542.0,558.71 543.4,558.85 544.8,558.99 546.1,559.13 547.5,559.27 548.9,559.41 550.3,559.55 551.7,559.69 553.0,559.83 554.4,559.97 555.8,560.11 557.2,560.25 558.6,560.39 559.9,560.53 561.3,560.67 562.7,560.81 564.1,560.95 565.5,561.09 566.8,561.23 568.2,561.37 569.6,561.51 571.0,561.65 572.4,561.79 573.7,561.93 575.1,562.07 576.5,562.21 577.9,562.35 579.3,562.49 580.6,562.63 582.0,562.77 583.4,562.91 584.8,563.05 586.2,563.19 587.5,563.33 588.9,563.47 590.3,563.61 591.7,563.75 593.1,563.89 594.4,564.03 595.8,564.17 597.2,564.31 598.6,564.45 600.0,564.59 601.3,564.73 602.7,564.87 604.1,565.01 605.5,565.15 606.9,565.29 608.2,565.43 609.6,565.57 611.0,565.71 612.4,565.85 613.8,565.99 615.1,566.13 616.5,566.27 617.9,566.41 619.3,566.55 620.7,566.69 622.0,566.83 623.4,566.97 624.8,567.11 626.2,567.25 627.6,567.39 628.9,567.53 630.3,567.67 631.7,567.81 633.1,567.95 634.5,568.09 635.8,568.23 637.2,568.37 638.6,568.51 640.0,568.65 641.4,568.79 642.7,568.93 644.1,569.07 645.5,569.21 646.9,569.35 648.3,569.49 649.6,569.63 651.0,569.77 652.4,569.91 653.8,570.05 655.2,570.19 656.5,570.33 657.9,570.47 659.3,570.61 660.7,570.75 662.1,570.89 663.4,571.03 664.8,571.17 666.2,571.31 667.6,571.45 669.0,571.59 670.3,571.73 671.7,571.87 673.1,572.01 674.5,572.15 675.9,572.29 677.2,572.43 678.6,572.57 680.0,572.71 681.4,572.85 682.8,572.99 684.1,573.13 685.5,573.27 686.9,573.41 688.3,573.55 689.7,573.69 691.0,573.83 692.4,573.97 693.8,574.11 695.2,574.25 696.6,574.39 697.9,574.53 699.3,574.67 700.7,574.81 702.1,574.95 703.5,575.09 704.8,575.23 706.2,575.37 707.6,575.51 709.0,575.65 710.4,575.79 711.7,575.93 713.1,576.07 714.5,576.21 715.9,576.35 717.3,576.49 718.6,576.63 720.0,576.77 721.4,576.91 722.8,577.05 724.2,577.19 725.5,577.33 726.9,577.47 728.3,577.61 729.7,577.75 731.1,577.89 732.4,578.03 733.8,578.17 735.2,578.31 736.6,578.45 738.0,578.59 739.3,578.73 740.7,578.87 742.1,579.01 743.5,579.15 744.9,579.29 746.2,579.43 747.6,579.57 749.0,579.71 750.4,579.85 751.8,579.99 753.1,580.13 754.5,580.27 755.9,580.41 757.3,580.55 758.7,580.43 760.0,580.56 761.4,580.70 762.8,580.84 764.2,580.97 765.6,581.11 766.9,581.24 768.3,581.38 769.7,581.51 771.1,581.65 772.5,581.79 773.8,581.92 775.2,582.06 776.6,582.19 778.0,582.33 779.4,582.46 780.7,582.60 782.1,582.73 783.5,582.87 784.9,583.00 786.3,583.14 787.6,583.27 789.0,583.41 790.4,583.54 791.8,583.68 793.2,583.81 794.5,583.95 795.9,584.08 797.3,584.21 798.7,584.35 800.1,584.48 801.4,584.62 802.8,584.75 804.2,584.88 805.6,585.02 807.0,585.15 808.3,585.28 809.7,585.42 811.1,585.55 812.5,585.68 813.9,585.82 815.2,585.95 816.6,586.08 818.0,586.21 819.4,586.35 820.8,586.48 822.1,586.61 823.5,586.74 824.9,586.87 826.3,587.00 827.7,587.14 829.0,587.27 830.4,587.40 831.8,587.53 833.2,587.66 834.6,587.79 835.9,587.92 837.3,588.05 838.7,588.18 840.1,588.31 841.5,588.44 842.8,588.57 844.2,588.70 845.6,588.83 847.0,588.96 848.4,589.09 849.7,589.22 851.1,589.34 852.5,589.47 853.9,589.60 855.3,589.73 856.6,589.86 858.0,589.98 859.4,590.11 860.8,590.24 862.2,590.36 863.5,590.49 864.9,590.61 866.3,590.74 867.7,590.86 869.1,590.99 870.4,591.11 871.8,591.24 873.2,591.36 874.6,591.49 876.0,591.61 877.3,591.73 878.7,591.85 880.1,591.98 881.5,592.10 882.9,592.22 884.2,592.34 885.6,592.46 887.0,592.58 888.4,592.70 889.8,592.82 891.1,592.94 892.5,593.06 893.9,593.17 895.3,593.29 896.7,593.41 898.0,593.52 899.4,593.64 900.8,593.75 902.2,593.87 903.6,593.98 904.9,594.09 906.3,594.20 907.7,594.31 909.1,594.42 910.5,594.53 911.8,594.64 913.2,594.75 914.6,594.86 916.0,594.96 917.4,595.07 918.7,595.17 920.1,595.28 921.5,595.38 922.9,595.48 924.3,595.58 925.6,595.68 927.0,595.78 928.4,595.87 929.8,595.97 931.2,596.06 932.5,596.15 933.9,596.24 935.3,596.33 936.7,596.42 938.1,596.51 939.4,596.59 940.8,596.67 942.2,596.75 943.6,596.83 945.0,596.90 946.3,596.98 947.7,597.05 949.1,597.11 950.5,597.18 951.9,597.24 953.2,597.30 954.6,597.35 956.0,597.41 957.4,597.45 958.8,597.50 960.1,597.54 961.5,597.57 962.9,597.60 964.3,597.63 965.7,597.65 967.0,597.66 968.4,597.67 969.8,597.67 971.2,597.67 972.6,597.65 973.9,597.63 975.3,597.60 976.7,597.55 978.1,597.50 979.5,597.43 980.8,597.36 982.2,597.26 983.6,597.15 985.0,597.03 986.4,596.88 987.7,596.71 989.1,596.52 990.5,596.30 991.9,596.05 993.3,595.77 994.6,595.45 996.0,595.09 997.4,594.68 998.8,594.21 1000.2,593.69 1001.5,593.11 1002.9,592.47 1004.3,591.79 1005.7,591.09 1007.1,590.44 1008.4,589.96 1009.8,589.82 1011.2,590.21 1012.6,591.17 1014.0,592.63 1015.3,594.40 1016.7,596.31 1018.1,598.28 1019.5,600.23 1020.9,602.16 1022.2,604.06 1023.6,605.94 1025.0,607.80 1026.4,609.66 1027.8,611.54 1029.1,613.45 1030.5,615.42 1031.9,617.46 1033.3,619.60 1034.7,621.87 1036.0,624.30 1037.4,626.90 1038.8,629.62 1040.2,632.22 1041.6,634.06 1042.9,634.44 1044.3,633.51 1045.7,632.05 1047.1,630.56 1048.5,629.23 1049.8,628.09 1051.2,627.12 1052.6,626.29 1054.0,625.58 1055.4,624.98 1056.7,624.45 1058.1,624.00 1059.5,623.61 1060.9,623.26 1062.3,622.96 1063.6,622.70 1065.0,622.48 1066.4,622.28 1067.8,622.10 1069.2,621.95 1070.5,621.82 1071.9,621.71 1073.3,621.62 1074.7,621.54 1076.1,621.47 1077.4,621.42 1078.8,621.38 1080.2,621.34 1081.6,621.32 1083.0,621.31 1084.3,621.30 1085.7,621.30 1087.1,621.31 1088.5,621.32 1089.9,621.34 1091.2,621.37 1092.6,621.40 1094.0,621.44 1095.4,621.48 1096.8,621.52 1098.1,621.57 1099.5,621.62 1100.9,621.68 1102.3,621.74 1103.7,621.80 1105.0,621.86 1106.4,621.93 1107.8,622.00 1109.2,622.08 1110.6,622.15 1111.9,622.23 1113.3,622.31 1114.7,622.39 1116.1,622.47 1117.5,622.56 1118.8,622.65 1120.2,622.74 1121.6,622.83 1123.0,622.92 1124.4,623.01 1125.7,623.11 1127.1,623.20 1128.5,623.30 1129.9,623.40 1131.3,623.50 1132.6,623.60 1134.0,623.71 1135.4,623.81 1136.8,623.91 1138.2,624.02 1139.5,624.13 1140.9,624.23 1142.3,624.34 1143.7,624.45 1145.1,624.56 1146.4,624.67 1147.8,624.78 1149.2,624.89 1150.6,625.01 1152.0,625.12 1153.3,625.23 1154.7,625.35 1156.1,625.46 1157.5,625.58 1158.9,625.70 1160.2,625.81 1161.6,625.93 1163.0,626.05 1164.4,626.17 1165.8,626.29 1167.1,626.41 1168.5,626.53 1169.9,626.65 1171.3,626.77 1172.7,626.89 1174.0,627.01 1175.4,627.13 1176.8,627.26 1178.2,627.38 1179.6,627.50 1180.9,627.63 1182.3,627.75 1183.7,627.87 1185.1,628.00 1186.5,628.12 1187.8,628.25 1189.2,628.37 1190.6,628.50 1192.0,628.63 1193.4,628.75 1194.7,628.88 1196.1,629.01 1197.5,629.13 1198.9,629.26 1200.3,629.39 1201.6,629.52 1203.0,629.64 1204.4,629.77 1205.8,629.90 1207.2,630.03 1208.5,630.16 1209.9,630.29 1211.3,630.42 1212.7,630.55 1214.1,630.68 1215.4,630.81 1216.8,630.94 1218.2,631.07 1219.6,631.20 1221.0,631.33 1222.3,631.46 1223.7,631.59 1225.1,631.72 1226.5,631.85 1227.9,631.98 1229.2,632.12 1230.6,632.25 1232.0,632.38 1233.4,632.51 1234.8,632.64 1236.1,632.78 1237.5,632.91 1238.9,633.04 1240.3,633.17 1241.7,633.31 1243.0,633.44 1244.4,633.57 1245.8,633.71 1247.2,633.84 1248.6,633.97 1249.9,634.11 1251.3,634.24 1252.7,634.37 1254.1,634.51 1255.5,634.64 1256.8,634.78 1258.2,634.91 1259.6,635.04 1261.0,635.18 1262.4,635.31 1263.7,635.45 1265.1,635.58 1266.5,635.72 1267.9,635.85 1269.3,635.99 1270.6,636.12 1272.0,636.26 1273.4,636.39 1274.8,636.53 1276.2,636.66 1277.5,636.80 1278.9,636.93 1280.3,637.07 1281.7,637.20 1283.1,637.34 1284.4,637.48 1285.8,637.61 1287.2,637.75 1288.6,637.88 1290.0,638.02 1291.3,638.15 1292.7,638.29 1294.1,638.43 1295.5,638.56 1296.9,638.70 1298.2,638.84 1299.6,638.97 1301.0,639.11" fill="none" stroke="#000080" stroke-width="1" shape-rendering="crispEdges"/>
<rect x="335.5" y="522.5" width="966" height="122" fill="none" stroke="#000" stroke-width="1"/>
<line x1="331" y1="627.5" x2="335" y2="627.5" stroke="#000"/>
<line x1="333" y1="620.5" x2="335" y2="620.5" stroke="#000"/>
<line x1="333" y1="616.5" x2="335" y2="616.5" stroke="#000"/>
<line x1="333" y1="613.5" x2="335" y2="613.5" stroke="#000"/>
<line x1="333" y1="610.5" x2="335" y2="610.5" stroke="#000"/>
<line x1="333" y1="608.5" x2="335" y2="608.5" stroke="#000"/>
<line x1="333" y1="607.5" x2="335" y2="607.5" stroke="#000"/>
<line x1="333" y1="605.5" x2="335" y2="605.5" stroke="#000"/>
<line x1="333" y1="604.5" x2="335" y2="604.5" stroke="#000"/>
<line x1="331" y1="603.5" x2="335" y2="603.5" stroke="#000"/>
<line x1="333" y1="595.5" x2="335" y2="595.5" stroke="#000"/>
<line x1="333" y1="591.5" x2="335" y2="591.5" stroke="#000"/>
<line x1="333" y1="588.5" x2="335" y2="588.5" stroke="#000"/>
<line x1="333" y1="586.5" x2="335" y2="586.5" stroke="#000"/>
<line x1="333" y1="584.5" x2="335" y2="584.5" stroke="#000"/>
<line x1="333" y1="582.5" x2="335" y2="582.5" stroke="#000"/>
<line x1="333" y1="581.5" x2="335" y2="581.5" stroke="#000"/>
<line x1="333" y1="579.5" x2="335" y2="579.5" stroke="#000"/>
<line x1="331" y1="578.5" x2="335" y2="578.5" stroke="#000"/>
<line x1="333" y1="571.5" x2="335" y2="571.5" stroke="#000"/>
<line x1="333" y1="567.5" x2="335" y2="567.5" stroke="#000"/>
<line x1="333" y1="564.5" x2="335" y2="564.5" stroke="#000"/>
<line x1="333" y1="561.5" x2="335" y2="561.5" stroke="#000"/>
<line x1="333" y1="559.5" x2="335" y2="559.5" stroke="#000"/>
<line x1="333" y1="558.5" x2="335" y2="558.5" stroke="#000"/>
<line x1="333" y1="556.5" x2="335" y2="556.5" stroke="#000"/>
<line x1="333" y1="555.5" x2="335" y2="555.5" stroke="#000"/>
<line x1="331" y1="554.5" x2="335" y2="554.5" stroke="#000"/>
<line x1="333" y1="546.5" x2="335" y2="546.5" stroke="#000"/>
<line x1="333" y1="542.5" x2="335" y2="542.5" stroke="#000"/>
<line x1="333" y1="539.5" x2="335" y2="539.5" stroke="#000"/>
<line x1="333" y1="537.5" x2="335" y2="537.5" stroke="#000"/>
<line x1="333" y1="535.5" x2="335" y2="535.5" stroke="#000"/>
<line x1="333" y1="533.5" x2="335" y2="533.5" stroke="#000"/>
<line x1="333" y1="532.5" x2="335" y2="532.5" stroke="#000"/>
<line x1="333" y1="530.5" x2="335" y2="530.5" stroke="#000"/>
<line x1="331" y1="529.5" x2="335" y2="529.5" stroke="#000"/>
<line x1="333" y1="522.5" x2="335" y2="522.5" stroke="#000"/>
<line x1="333" y1="644.5" x2="335" y2="644.5" stroke="#000"/>
<line x1="333" y1="640.5" x2="335" y2="640.5" stroke="#000"/>
<line x1="333" y1="637.5" x2="335" y2="637.5" stroke="#000"/>
<line x1="333" y1="635.5" x2="335" y2="635.5" stroke="#000"/>
<line x1="333" y1="633.5" x2="335" y2="633.5" stroke="#000"/>
<line x1="333" y1="631.5" x2="335" y2="631.5" stroke="#000"/>
<line x1="333" y1="630.5" x2="335" y2="630.5" stroke="#000"/>
<line x1="333" y1="628.5" x2="335" y2="628.5" stroke="#000"/>
<line x1="335.5" y1="644" x2="335.5" y2="646" stroke="#000"/>
<line x1="420.5" y1="644" x2="420.5" y2="646" stroke="#000"/>
<line x1="480.5" y1="644" x2="480.5" y2="646" stroke="#000"/>
<line x1="527.5" y1="644" x2="527.5" y2="646" stroke="#000"/>
<line x1="565.5" y1="644" x2="565.5" y2="646" stroke="#000"/>
<line x1="598.5" y1="644" x2="598.5" y2="646" stroke="#000"/>
<line x1="626.5" y1="644" x2="626.5" y2="646" stroke="#000"/>
<line x1="651.5" y1="644" x2="651.5" y2="646" stroke="#000"/>
<line x1="673.5" y1="641" x2="673.5" y2="648" stroke="#000"/>
<line x1="818.5" y1="644" x2="818.5" y2="646" stroke="#000"/>
<line x1="903.5" y1="644" x2="903.5" y2="646" stroke="#000"/>
<line x1="963.5" y1="644" x2="963.5" y2="646" stroke="#000"/>
<line x1="1010.5" y1="644" x2="1010.5" y2="646" stroke="#000"/>
<line x1="1048.5" y1="644" x2="1048.5" y2="646" stroke="#000"/>
<line x1="1081.5" y1="644" x2="1081.5" y2="646" stroke="#000"/>
<line x1="1109.5" y1="644" x2="1109.5" y2="646" stroke="#000"/>
<line x1="1134.5" y1="644" x2="1134.5" y2="646" stroke="#000"/>
<line x1="1156.5" y1="641" x2="1156.5" y2="648" stroke="#000"/>
<line x1="1301.5" y1="644" x2="1301.5" y2="646" stroke="#000"/>
<line x1="335.5" y1="644" x2="335.5" y2="648" stroke="#000"/>
<line x1="1301.5" y1="644" x2="1301.5" y2="648" stroke="#000"/>
<text x="329" y="533.6" font-size="12.5" text-anchor="end" fill="#000" >0.100000</text>
<text x="329" y="558.6" font-size="12.5" text-anchor="end" fill="#000" >0.010000</text>
<text x="329" y="582.6" font-size="12.5" text-anchor="end" fill="#000" >0.001000</text>
<text x="329" y="607.6" font-size="12.5" text-anchor="end" fill="#000" >0.000100</text>
<text x="329" y="631.6" font-size="12.5" text-anchor="end" fill="#000" >0.000010</text>
<text x="335.5" y="659.7" font-size="12.5" text-anchor="middle" fill="#000" >20</text>
<text x="673.5" y="659.7" font-size="12.5" text-anchor="middle" fill="#000" >100</text>
<text x="1156.5" y="659.7" font-size="12.5" text-anchor="middle" fill="#000" >1000</text>
<text x="1301.5" y="659.7" font-size="12.5" text-anchor="middle" fill="#000" >2000</text>
<text x="818.5" y="675.8" font-size="16" text-anchor="middle" letter-spacing="-0.4">Frequency (Hz)</text>
<text transform="translate(265.5,583) rotate(-90)" font-size="16" text-anchor="middle">Displacement (in p-p)</text>
<text x="1305" y="532" font-size="11" text-anchor="start" fill="#00ee00" >Demand</text>
<text x="1305" y="552" font-size="11" text-anchor="start" fill="#2222ee" >Control</text>
<text x="1305" y="571" font-size="11" text-anchor="start" fill="#5f8a1a" >Ch1</text>
<text x="1305" y="591" font-size="11" text-anchor="start" fill="#22227f" >Ch2</text></svg>

<!-- STATUS BAR -->
<div class="a" style="left:0;top:709px;width:1366px;height:19px;background:linear-gradient(#474c58,#3f4450 38%,#2d2d2d 45%,#2d2d2d)"></div>
<div class="t" style="left:4.5px;top:715px;font-size:11.2px;color:#f4f4f4">End of Sweep Test</div>
<div class="a" style="left:940px;top:711px;width:1px;height:17px;background:#6a6a6a"></div>
<div class="a" style="left:946px;top:711px;width:1px;height:17px;background:#6a6a6a"></div>
<div class="a" style="left:952px;top:711px;width:1px;height:17px;background:#6a6a6a"></div>
<div class="a" style="left:1065px;top:711px;width:1px;height:17px;background:#6a6a6a"></div>
<div class="a" style="left:1233px;top:711px;width:1px;height:17px;background:#6a6a6a"></div>
<div class="a" style="left:1326px;top:711px;width:1px;height:17px;background:#6a6a6a"></div>
<div class="t" style="left:956.5px;top:715px;font-size:11.2px;color:#f4f4f4">Sine</div>
<div class="t" style="left:1069.5px;top:715px;font-size:11.2px;color:#f4f4f4">Aaron_SimpleSine1</div>
<div class="t" style="left:1240.5px;top:715px;font-size:11.8px;color:#f4f4f4">Demonstration</div>
<div class="t" style="left:1330.5px;top:715px;font-size:11.5px;color:#f4f4f4">11.3.2</div>
<!-- TASKBAR -->
<div class="a" style="left:0;top:728px;width:1366px;height:8px;background:#5c5b2c"></div>
<div class="a" style="left:455px;top:728px;width:455px;height:8px;background:linear-gradient(120deg,#5c5b2c 0 4px,#a9a633 4px 25px,#5c5b2c 25px 55px,#a9a633 55px 339px,#5f5d2d 339px 371px,#a9a633 371px 391px,#66642f 391px)"></div>
<div class="a" style="left:910px;top:728px;width:456px;height:8px;background:#66642f"></div>
<div class="a" style="left:300px;top:729px;width:58px;height:7px;background:#76754a;border:1px solid #9a9a80"></div>
<div class="a" style="left:362px;top:729px;width:58px;height:7px;background:#8a8a66;border:1px solid #c0c0a0"></div>
<div class="a" style="left:31px;top:733px;width:6px;height:3px;background:#d8d8d8"></div>
<div class="a" style="left:77px;top:732px;width:18px;height:4px;border-radius:9px 9px 0 0;border-top:2px solid #e8a020;border-right:2px solid #3a8ad8"></div>
<div class="a" style="left:129px;top:733px;width:14px;height:3px;background:#b0a060"></div>
<div class="a" style="left:198px;top:732px;width:14px;height:4px;border-radius:7px 7px 0 0;background:#d84a3a"></div>
<div class="a" style="left:254px;top:733px;width:15px;height:3px;background:#2a6ad8;clip-path:polygon(0 100%,100% 0,100% 100%)"></div>
<div class="a" style="left:314px;top:732px;width:18px;height:4px;background:#2a6ad8;clip-path:polygon(0 100%,100% 0,100% 100%)"></div>

</body></html>
